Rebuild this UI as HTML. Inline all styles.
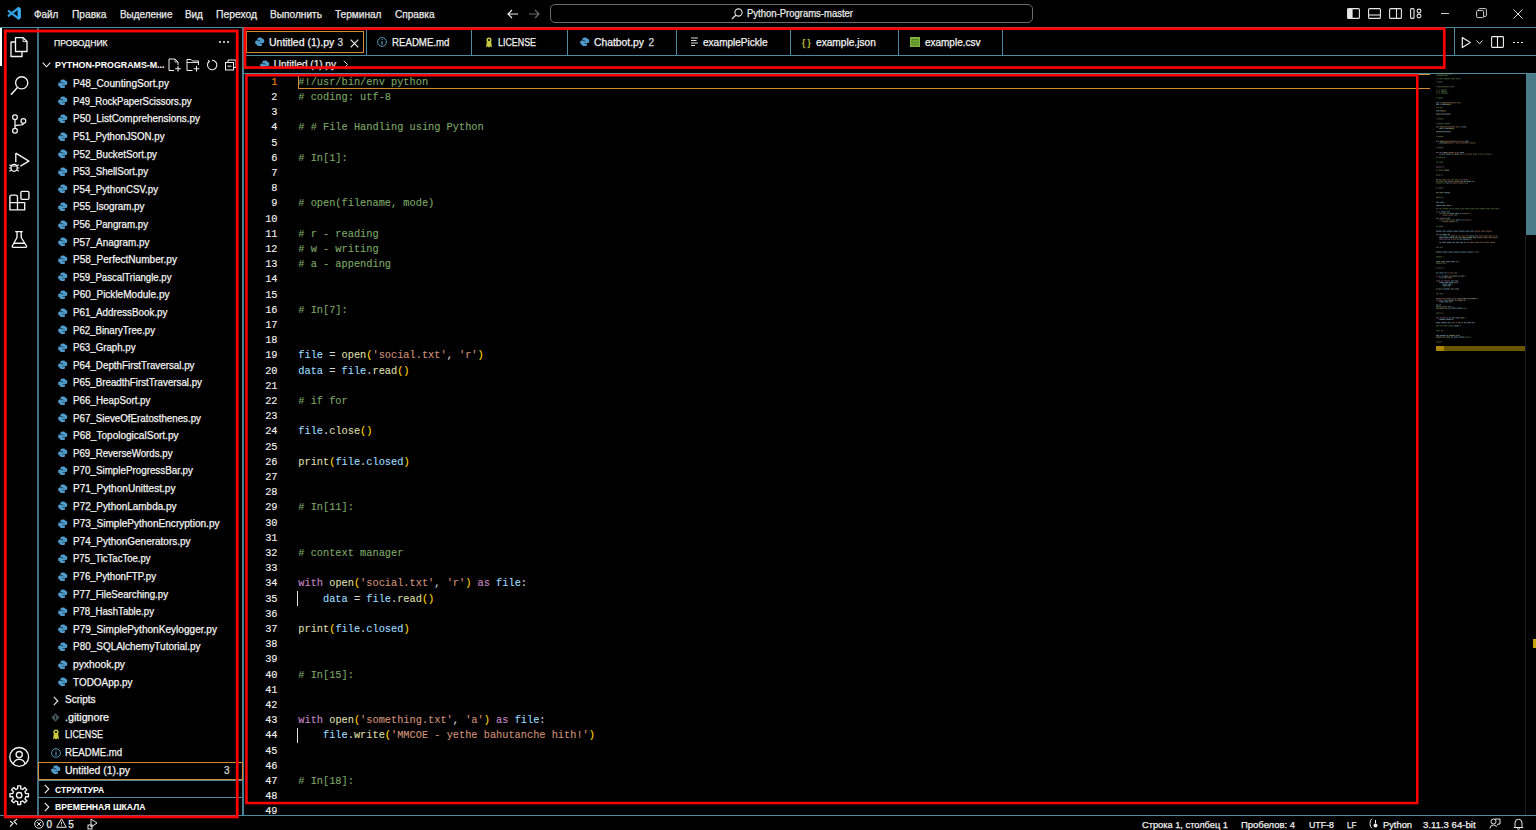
<!DOCTYPE html>
<html><head><meta charset="utf-8"><title>VS Code</title>
<style>
html,body{margin:0;padding:0;background:#000;}
body{width:1536px;height:830px;overflow:hidden;position:relative;font-family:'Liberation Sans', sans-serif;}
div{-webkit-text-stroke:0.25px currentColor;}
.b{-webkit-text-stroke:0.05px currentColor;}
.m{-webkit-text-stroke:0.12px currentColor;}
svg{overflow:visible}
</style></head><body>
<svg style="position:absolute;left:0px;top:0px;" width="30" height="27" viewBox="0 0 30 27" fill="none"><path d="M8.7 11.1 L18.4 18.4 M8.7 15.7 L18.4 8.2" stroke="#2f9de0" stroke-width="2.3" stroke-linecap="round"/><path d="M17.6 8.4 Q17.6 7.2 18.8 7.3 L20 7.8 Q20.9 8.2 20.9 9.2 V17.4 Q20.9 18.4 20 18.8 L18.8 19.4 Q17.6 19.6 17.6 18.3 Z" fill="#3aaaf0"/></svg><div style="position:absolute;left:34.4px;top:10px;font:normal 10.0px/10.0px 'Liberation Sans', sans-serif;color:#e8e8e8;white-space:pre;transform:scaleX(0.9881);transform-origin:0 0;">Файл</div><div style="position:absolute;left:71.6px;top:10px;font:normal 10.0px/10.0px 'Liberation Sans', sans-serif;color:#e8e8e8;white-space:pre;transform:scaleX(1.0183);transform-origin:0 0;">Правка</div><div style="position:absolute;left:119.6px;top:10px;font:normal 10.0px/10.0px 'Liberation Sans', sans-serif;color:#e8e8e8;white-space:pre;transform:scaleX(0.9887);transform-origin:0 0;">Выделение</div><div style="position:absolute;left:184.8px;top:10px;font:normal 10.0px/10.0px 'Liberation Sans', sans-serif;color:#e8e8e8;white-space:pre;transform:scaleX(0.9893);transform-origin:0 0;">Вид</div><div style="position:absolute;left:215.5px;top:10px;font:normal 10.0px/10.0px 'Liberation Sans', sans-serif;color:#e8e8e8;white-space:pre;transform:scaleX(1.0348);transform-origin:0 0;">Переход</div><div style="position:absolute;left:269.7px;top:10px;font:normal 10.0px/10.0px 'Liberation Sans', sans-serif;color:#e8e8e8;white-space:pre;transform:scaleX(1.0125);transform-origin:0 0;">Выполнить</div><div style="position:absolute;left:335px;top:10px;font:normal 10.0px/10.0px 'Liberation Sans', sans-serif;color:#e8e8e8;white-space:pre;transform:scaleX(1.0095);transform-origin:0 0;">Терминал</div><div style="position:absolute;left:394.5px;top:10px;font:normal 10.0px/10.0px 'Liberation Sans', sans-serif;color:#e8e8e8;white-space:pre;transform:scaleX(1.0068);transform-origin:0 0;">Справка</div><svg style="position:absolute;left:507px;top:9px;" width="12" height="10" viewBox="0 0 12 10" fill="none"><path d="M5 1 L1 5 L5 9 M1 5 H11" stroke="#ececec" stroke-width="1.2"/></svg><svg style="position:absolute;left:528px;top:9px;" width="12" height="10" viewBox="0 0 12 10" fill="none"><path d="M7 1 L11 5 L7 9 M11 5 H1" stroke="#6a6a6a" stroke-width="1.2"/></svg><div style="position:absolute;left:550px;top:4px;width:481px;height:17px;border:1px solid #6b6b6b;border-radius:5px;"></div><svg style="position:absolute;left:731px;top:8px;" width="12" height="12" viewBox="0 0 12 12" fill="none"><circle cx="7.5" cy="4.5" r="3.6" stroke="#e0e0e0" stroke-width="1.1"/><path d="M5 7 L1 11" stroke="#e0e0e0" stroke-width="1.2"/></svg><div style="position:absolute;left:747px;top:9px;font:normal 10.0px/10.0px 'Liberation Sans', sans-serif;color:#ececec;white-space:pre;transform:scaleX(0.9489);transform-origin:0 0;">Python-Programs-master</div><svg style="position:absolute;left:1347px;top:8px;" width="13" height="11" viewBox="0 0 13 11" fill="none"><rect x="0.6" y="0.6" width="11.8" height="9.8" rx="1" stroke="#e6e6e6" stroke-width="1.1"/><rect x="0.6" y="0.6" width="5" height="9.8" fill="#e6e6e6"/></svg><svg style="position:absolute;left:1368px;top:8px;" width="13" height="11" viewBox="0 0 13 11" fill="none"><rect x="0.6" y="0.6" width="11.8" height="9.8" rx="1" stroke="#e6e6e6" stroke-width="1.1"/><path d="M0.6 7 H12.4" stroke="#e6e6e6" stroke-width="1.1"/></svg><svg style="position:absolute;left:1389px;top:8px;" width="13" height="11" viewBox="0 0 13 11" fill="none"><rect x="0.6" y="0.6" width="11.8" height="9.8" rx="1" stroke="#e6e6e6" stroke-width="1.1"/><path d="M7.5 0.6 V10.4" stroke="#e6e6e6" stroke-width="1.1"/></svg><svg style="position:absolute;left:1410px;top:8px;" width="13" height="11" viewBox="0 0 13 11" fill="none"><rect x="0.6" y="0.6" width="3.4" height="9.8" rx="1" stroke="#e6e6e6" stroke-width="1.1"/><circle cx="9" cy="3" r="1.9" stroke="#e6e6e6" stroke-width="1.1"/><circle cx="9" cy="8" r="1.9" stroke="#e6e6e6" stroke-width="1.1"/></svg><div style="position:absolute;left:1440.5px;top:13.3px;width:8px;height:1px;background:#d0d0d0;"></div><svg style="position:absolute;left:1476px;top:8px;" width="11" height="11" viewBox="0 0 11 11" fill="none"><rect x="0.6" y="2.6" width="7" height="7" rx="1" stroke="#d0d0d0" stroke-width="1"/><path d="M2.6 2.6 V1.6 Q2.6 0.6 3.6 0.6 H9.4 Q10.4 0.6 10.4 1.6 V7.4 Q10.4 8.4 9.4 8.4 H7.6" stroke="#d0d0d0" stroke-width="1"/></svg><svg style="position:absolute;left:1513px;top:9px;" width="10" height="10" viewBox="0 0 10 10" fill="none"><path d="M0.5 0.5 L9.5 9.5 M9.5 0.5 L0.5 9.5" stroke="#d8d8d8" stroke-width="1"/></svg><div style="position:absolute;left:0px;top:27px;width:1536px;height:1px;background:#4f8b9f;"></div><div style="position:absolute;left:37px;top:28px;width:2px;height:787px;background:#3f6f80;"></div><div style="position:absolute;left:242px;top:28px;width:2px;height:787px;background:#4a8194;"></div><div style="position:absolute;left:0px;top:815px;width:1536px;height:1px;background:#4f8b9f;"></div><div style="position:absolute;left:0px;top:28px;width:2px;height:38px;background:#ffffff;"></div><svg style="position:absolute;left:0px;top:0px;" width="40" height="830" viewBox="0 0 40 830" fill="none"><path d="M15.5 37.6 H23 L27 41.6 V51.5 H15.5 Z" stroke="#f4f4f4" stroke-width="1.35" stroke-linejoin="round"/><path d="M15.5 42 H11 V56.5 H22 V51.5" stroke="#f4f4f4" stroke-width="1.35" stroke-linejoin="round"/><path d="M23 37.6 V41.6 H27" stroke="#f4f4f4" stroke-width="0.9"/><circle cx="21.7" cy="82.8" r="6.1" stroke="#f4f4f4" stroke-width="1.35"/><path d="M17.4 87.4 L11 94.8" stroke="#f4f4f4" stroke-width="1.5"/><circle cx="15" cy="117.3" r="2.4" stroke="#f4f4f4" stroke-width="1.25"/><circle cx="15" cy="130.8" r="2.4" stroke="#f4f4f4" stroke-width="1.25"/><circle cx="23.4" cy="121" r="2.4" stroke="#f4f4f4" stroke-width="1.25"/><path d="M15 119.7 V128.4 M15 126 Q16 125 19 125 Q23.4 125 23.4 123.4" stroke="#f4f4f4" stroke-width="1.25"/><path d="M15.8 153.1 V162.3 M15.8 153.1 L28.9 161.1 L20.4 166.2" stroke="#f4f4f4" stroke-width="1.35" stroke-linejoin="round"/><ellipse cx="14.1" cy="167.8" rx="3.1" ry="3.5" stroke="#f4f4f4" stroke-width="1.25"/><path d="M9.3 164.8 L11.1 165.7 M8.9 168 H11 M9.3 171.2 L11.1 170.3 M18.9 164.8 L17.1 165.7 M19.3 168 H17.2 M18.9 171.2 L17.1 170.3 M11.8 166 H16.4" stroke="#f4f4f4" stroke-width="1.05"/><path d="M9.9 197 Q9.9 195.1 11.8 195.1 H15.6 Q17.5 195.1 17.5 197 V209.9 H9.9 Z M9.9 202.6 H24.7 V209.9 H17.5" stroke="#f4f4f4" stroke-width="1.35" stroke-linejoin="round"/><rect x="20.9" y="191.3" width="8" height="8" rx="1" stroke="#f4f4f4" stroke-width="1.35"/><path d="M15.2 231.6 H22.8 M17 231.6 V237.5 L12.3 246 Q11.8 247.3 13.2 247.3 H25.6 Q27 247.3 26.5 246 L21.2 237.5 V231.6 M14.2 243.2 H24.6" stroke="#f4f4f4" stroke-width="1.35" stroke-linejoin="round"/><circle cx="19.2" cy="756.9" r="9.4" stroke="#f4f4f4" stroke-width="1.35"/><circle cx="19.2" cy="754.6" r="3.1" stroke="#f4f4f4" stroke-width="1.35"/><path d="M13.3 764 Q14.5 759.3 19.2 759.3 Q23.9 759.3 25.1 764" stroke="#f4f4f4" stroke-width="1.35"/><polygon points="16.64,789.01 17.69,788.67 17.65,785.93 20.75,785.93 20.71,788.67 21.76,789.01 22.75,789.52 24.66,787.55 26.85,789.74 24.88,791.65 25.39,792.64 25.73,793.69 28.47,793.65 28.47,796.75 25.73,796.71 25.39,797.76 24.88,798.75 26.85,800.66 24.66,802.85 22.75,800.88 21.76,801.39 20.71,801.73 20.75,804.47 17.65,804.47 17.69,801.73 16.64,801.39 15.65,800.88 13.74,802.85 11.55,800.66 13.52,798.75 13.01,797.76 12.67,796.71 9.93,796.75 9.93,793.65 12.67,793.69 13.01,792.64 13.52,791.65 11.55,789.74 13.74,787.55 15.65,789.52" stroke="#f4f4f4" stroke-width="1.35" stroke-linejoin="round"/><circle cx="19.2" cy="795.2" r="2.7" stroke="#f4f4f4" stroke-width="1.35"/></svg><div style="position:absolute;left:54.4px;top:39px;font:normal 8.8px/8.8px 'Liberation Sans', sans-serif;color:#f0f0f0;white-space:pre;transform:scaleX(0.9776);transform-origin:0 0;">ПРОВОДНИК</div><div style="position:absolute;left:219.2px;top:41.2px;width:2.1px;height:2.1px;background:#f0f0f0;border-radius:1px"></div><div style="position:absolute;left:223.2px;top:41.2px;width:2.1px;height:2.1px;background:#f0f0f0;border-radius:1px"></div><div style="position:absolute;left:227.2px;top:41.2px;width:2.1px;height:2.1px;background:#f0f0f0;border-radius:1px"></div><svg style="position:absolute;left:42px;top:62px;" width="9" height="6" viewBox="0 0 9 6" fill="none"><path d="M0.7 0.7 L4.5 4.8 L8.3 0.7" stroke="#f0f0f0" stroke-width="1.1"/></svg><div class="b" style="position:absolute;left:54.6px;top:61px;font:bold 8.84px/8.84px 'Liberation Sans', sans-serif;color:#ffffff;white-space:pre;transform:scaleX(1.0011);transform-origin:0 0;">PYTHON-PROGRAMS-M...</div><svg style="position:absolute;left:168px;top:58px;" width="14" height="14" viewBox="0 0 14 14" fill="none"><path d="M6 12.5 H1 V1 H7 L10 4 V7" stroke="#f0f0f0" stroke-width="1"/><path d="M7 1 V4 H10" stroke="#f0f0f0" stroke-width="0.8"/><path d="M10 8 V13.5 M7.2 10.8 H12.8" stroke="#f0f0f0" stroke-width="1.1"/></svg><svg style="position:absolute;left:186px;top:58px;" width="15" height="14" viewBox="0 0 15 14" fill="none"><path d="M6.5 12.5 H1 V1.5 H5 L6.5 3 H12.5 V7" stroke="#f0f0f0" stroke-width="1"/><path d="M1 4.5 H12.5" stroke="#f0f0f0" stroke-width="0.9"/><path d="M10.5 8 V13.5 M7.7 10.8 H13.3" stroke="#f0f0f0" stroke-width="1.1"/></svg><svg style="position:absolute;left:206px;top:59px;" width="12" height="12" viewBox="0 0 12 12" fill="none"><path d="M3.4 2.2 A4.7 4.7 0 1 0 6 1.3" stroke="#f0f0f0" stroke-width="1.1"/><path d="M2 0.8 L3.6 2.4 L1.8 3.8" stroke="#f0f0f0" stroke-width="1"/></svg><svg style="position:absolute;left:225px;top:59px;" width="12" height="12" viewBox="0 0 12 12" fill="none"><rect x="0.5" y="3.5" width="8" height="7.5" stroke="#f0f0f0" stroke-width="1"/><path d="M3 3.5 V1 H11 V8.5 H8.5" stroke="#f0f0f0" stroke-width="1"/><path d="M2.5 7.2 H6.5" stroke="#f0f0f0" stroke-width="1"/></svg><svg style="position:absolute;left:58px;top:78.85px;" width="9.5" height="9.5" viewBox="0 0 10 10" fill="none"><path d="M5 0.4 C3 0.4 2.6 1.2 2.6 2.2 V3.2 H5.2 V3.7 H1.6 C0.6 3.7 0.2 4.6 0.2 5.8 C0.2 7.1 0.7 7.9 1.6 7.9 H2.6 V6.6 C2.6 5.6 3.4 4.9 4.4 4.9 H6.6 C7.4 4.9 8 4.3 8 3.5 V2.2 C8 1.1 7 0.4 5 0.4 Z" fill="#4f9ccc"/><path d="M5 9.6 C7 9.6 7.4 8.8 7.4 7.8 V6.8 H4.8 V6.3 H8.4 C9.4 6.3 9.8 5.4 9.8 4.2 C9.8 2.9 9.3 2.1 8.4 2.1 H7.4 V3.4 C7.4 4.4 6.6 5.1 5.6 5.1 H3.4 C2.6 5.1 2 5.7 2 6.5 V7.8 C2 8.9 3 9.6 5 9.6 Z" fill="#4f9ccc"/></svg><div style="position:absolute;left:72.5px;top:79px;font:normal 10.0px/10.0px 'Liberation Sans', sans-serif;color:#f4f4f4;white-space:pre;transform:scaleX(1.0097);transform-origin:0 0;">P48_CountingSort.py</div><svg style="position:absolute;left:58px;top:96.44999999999999px;" width="9.5" height="9.5" viewBox="0 0 10 10" fill="none"><path d="M5 0.4 C3 0.4 2.6 1.2 2.6 2.2 V3.2 H5.2 V3.7 H1.6 C0.6 3.7 0.2 4.6 0.2 5.8 C0.2 7.1 0.7 7.9 1.6 7.9 H2.6 V6.6 C2.6 5.6 3.4 4.9 4.4 4.9 H6.6 C7.4 4.9 8 4.3 8 3.5 V2.2 C8 1.1 7 0.4 5 0.4 Z" fill="#4f9ccc"/><path d="M5 9.6 C7 9.6 7.4 8.8 7.4 7.8 V6.8 H4.8 V6.3 H8.4 C9.4 6.3 9.8 5.4 9.8 4.2 C9.8 2.9 9.3 2.1 8.4 2.1 H7.4 V3.4 C7.4 4.4 6.6 5.1 5.6 5.1 H3.4 C2.6 5.1 2 5.7 2 6.5 V7.8 C2 8.9 3 9.6 5 9.6 Z" fill="#4f9ccc"/></svg><div style="position:absolute;left:72.5px;top:97px;font:normal 10.0px/10.0px 'Liberation Sans', sans-serif;color:#f4f4f4;white-space:pre;transform:scaleX(0.9560);transform-origin:0 0;">P49_RockPaperScissors.py</div><svg style="position:absolute;left:58px;top:114.05px;" width="9.5" height="9.5" viewBox="0 0 10 10" fill="none"><path d="M5 0.4 C3 0.4 2.6 1.2 2.6 2.2 V3.2 H5.2 V3.7 H1.6 C0.6 3.7 0.2 4.6 0.2 5.8 C0.2 7.1 0.7 7.9 1.6 7.9 H2.6 V6.6 C2.6 5.6 3.4 4.9 4.4 4.9 H6.6 C7.4 4.9 8 4.3 8 3.5 V2.2 C8 1.1 7 0.4 5 0.4 Z" fill="#4f9ccc"/><path d="M5 9.6 C7 9.6 7.4 8.8 7.4 7.8 V6.8 H4.8 V6.3 H8.4 C9.4 6.3 9.8 5.4 9.8 4.2 C9.8 2.9 9.3 2.1 8.4 2.1 H7.4 V3.4 C7.4 4.4 6.6 5.1 5.6 5.1 H3.4 C2.6 5.1 2 5.7 2 6.5 V7.8 C2 8.9 3 9.6 5 9.6 Z" fill="#4f9ccc"/></svg><div style="position:absolute;left:72.5px;top:114px;font:normal 10.0px/10.0px 'Liberation Sans', sans-serif;color:#f4f4f4;white-space:pre;transform:scaleX(0.9933);transform-origin:0 0;">P50_ListComprehensions.py</div><svg style="position:absolute;left:58px;top:131.65px;" width="9.5" height="9.5" viewBox="0 0 10 10" fill="none"><path d="M5 0.4 C3 0.4 2.6 1.2 2.6 2.2 V3.2 H5.2 V3.7 H1.6 C0.6 3.7 0.2 4.6 0.2 5.8 C0.2 7.1 0.7 7.9 1.6 7.9 H2.6 V6.6 C2.6 5.6 3.4 4.9 4.4 4.9 H6.6 C7.4 4.9 8 4.3 8 3.5 V2.2 C8 1.1 7 0.4 5 0.4 Z" fill="#4f9ccc"/><path d="M5 9.6 C7 9.6 7.4 8.8 7.4 7.8 V6.8 H4.8 V6.3 H8.4 C9.4 6.3 9.8 5.4 9.8 4.2 C9.8 2.9 9.3 2.1 8.4 2.1 H7.4 V3.4 C7.4 4.4 6.6 5.1 5.6 5.1 H3.4 C2.6 5.1 2 5.7 2 6.5 V7.8 C2 8.9 3 9.6 5 9.6 Z" fill="#4f9ccc"/></svg><div style="position:absolute;left:72.5px;top:132px;font:normal 10.0px/10.0px 'Liberation Sans', sans-serif;color:#f4f4f4;white-space:pre;transform:scaleX(0.9683);transform-origin:0 0;">P51_PythonJSON.py</div><svg style="position:absolute;left:58px;top:149.25px;" width="9.5" height="9.5" viewBox="0 0 10 10" fill="none"><path d="M5 0.4 C3 0.4 2.6 1.2 2.6 2.2 V3.2 H5.2 V3.7 H1.6 C0.6 3.7 0.2 4.6 0.2 5.8 C0.2 7.1 0.7 7.9 1.6 7.9 H2.6 V6.6 C2.6 5.6 3.4 4.9 4.4 4.9 H6.6 C7.4 4.9 8 4.3 8 3.5 V2.2 C8 1.1 7 0.4 5 0.4 Z" fill="#4f9ccc"/><path d="M5 9.6 C7 9.6 7.4 8.8 7.4 7.8 V6.8 H4.8 V6.3 H8.4 C9.4 6.3 9.8 5.4 9.8 4.2 C9.8 2.9 9.3 2.1 8.4 2.1 H7.4 V3.4 C7.4 4.4 6.6 5.1 5.6 5.1 H3.4 C2.6 5.1 2 5.7 2 6.5 V7.8 C2 8.9 3 9.6 5 9.6 Z" fill="#4f9ccc"/></svg><div style="position:absolute;left:72.5px;top:150px;font:normal 10.0px/10.0px 'Liberation Sans', sans-serif;color:#f4f4f4;white-space:pre;transform:scaleX(0.9812);transform-origin:0 0;">P52_BucketSort.py</div><svg style="position:absolute;left:58px;top:166.85px;" width="9.5" height="9.5" viewBox="0 0 10 10" fill="none"><path d="M5 0.4 C3 0.4 2.6 1.2 2.6 2.2 V3.2 H5.2 V3.7 H1.6 C0.6 3.7 0.2 4.6 0.2 5.8 C0.2 7.1 0.7 7.9 1.6 7.9 H2.6 V6.6 C2.6 5.6 3.4 4.9 4.4 4.9 H6.6 C7.4 4.9 8 4.3 8 3.5 V2.2 C8 1.1 7 0.4 5 0.4 Z" fill="#4f9ccc"/><path d="M5 9.6 C7 9.6 7.4 8.8 7.4 7.8 V6.8 H4.8 V6.3 H8.4 C9.4 6.3 9.8 5.4 9.8 4.2 C9.8 2.9 9.3 2.1 8.4 2.1 H7.4 V3.4 C7.4 4.4 6.6 5.1 5.6 5.1 H3.4 C2.6 5.1 2 5.7 2 6.5 V7.8 C2 8.9 3 9.6 5 9.6 Z" fill="#4f9ccc"/></svg><div style="position:absolute;left:72.5px;top:167px;font:normal 10.0px/10.0px 'Liberation Sans', sans-serif;color:#f4f4f4;white-space:pre;transform:scaleX(0.9705);transform-origin:0 0;">P53_ShellSort.py</div><svg style="position:absolute;left:58px;top:184.45000000000002px;" width="9.5" height="9.5" viewBox="0 0 10 10" fill="none"><path d="M5 0.4 C3 0.4 2.6 1.2 2.6 2.2 V3.2 H5.2 V3.7 H1.6 C0.6 3.7 0.2 4.6 0.2 5.8 C0.2 7.1 0.7 7.9 1.6 7.9 H2.6 V6.6 C2.6 5.6 3.4 4.9 4.4 4.9 H6.6 C7.4 4.9 8 4.3 8 3.5 V2.2 C8 1.1 7 0.4 5 0.4 Z" fill="#4f9ccc"/><path d="M5 9.6 C7 9.6 7.4 8.8 7.4 7.8 V6.8 H4.8 V6.3 H8.4 C9.4 6.3 9.8 5.4 9.8 4.2 C9.8 2.9 9.3 2.1 8.4 2.1 H7.4 V3.4 C7.4 4.4 6.6 5.1 5.6 5.1 H3.4 C2.6 5.1 2 5.7 2 6.5 V7.8 C2 8.9 3 9.6 5 9.6 Z" fill="#4f9ccc"/></svg><div style="position:absolute;left:72.5px;top:185px;font:normal 10.0px/10.0px 'Liberation Sans', sans-serif;color:#f4f4f4;white-space:pre;transform:scaleX(0.9716);transform-origin:0 0;">P54_PythonCSV.py</div><svg style="position:absolute;left:58px;top:202.05px;" width="9.5" height="9.5" viewBox="0 0 10 10" fill="none"><path d="M5 0.4 C3 0.4 2.6 1.2 2.6 2.2 V3.2 H5.2 V3.7 H1.6 C0.6 3.7 0.2 4.6 0.2 5.8 C0.2 7.1 0.7 7.9 1.6 7.9 H2.6 V6.6 C2.6 5.6 3.4 4.9 4.4 4.9 H6.6 C7.4 4.9 8 4.3 8 3.5 V2.2 C8 1.1 7 0.4 5 0.4 Z" fill="#4f9ccc"/><path d="M5 9.6 C7 9.6 7.4 8.8 7.4 7.8 V6.8 H4.8 V6.3 H8.4 C9.4 6.3 9.8 5.4 9.8 4.2 C9.8 2.9 9.3 2.1 8.4 2.1 H7.4 V3.4 C7.4 4.4 6.6 5.1 5.6 5.1 H3.4 C2.6 5.1 2 5.7 2 6.5 V7.8 C2 8.9 3 9.6 5 9.6 Z" fill="#4f9ccc"/></svg><div style="position:absolute;left:72.5px;top:202px;font:normal 10.0px/10.0px 'Liberation Sans', sans-serif;color:#f4f4f4;white-space:pre;transform:scaleX(0.9818);transform-origin:0 0;">P55_Isogram.py</div><svg style="position:absolute;left:58px;top:219.65px;" width="9.5" height="9.5" viewBox="0 0 10 10" fill="none"><path d="M5 0.4 C3 0.4 2.6 1.2 2.6 2.2 V3.2 H5.2 V3.7 H1.6 C0.6 3.7 0.2 4.6 0.2 5.8 C0.2 7.1 0.7 7.9 1.6 7.9 H2.6 V6.6 C2.6 5.6 3.4 4.9 4.4 4.9 H6.6 C7.4 4.9 8 4.3 8 3.5 V2.2 C8 1.1 7 0.4 5 0.4 Z" fill="#4f9ccc"/><path d="M5 9.6 C7 9.6 7.4 8.8 7.4 7.8 V6.8 H4.8 V6.3 H8.4 C9.4 6.3 9.8 5.4 9.8 4.2 C9.8 2.9 9.3 2.1 8.4 2.1 H7.4 V3.4 C7.4 4.4 6.6 5.1 5.6 5.1 H3.4 C2.6 5.1 2 5.7 2 6.5 V7.8 C2 8.9 3 9.6 5 9.6 Z" fill="#4f9ccc"/></svg><div style="position:absolute;left:72.5px;top:220px;font:normal 10.0px/10.0px 'Liberation Sans', sans-serif;color:#f4f4f4;white-space:pre;transform:scaleX(0.9705);transform-origin:0 0;">P56_Pangram.py</div><svg style="position:absolute;left:58px;top:237.25px;" width="9.5" height="9.5" viewBox="0 0 10 10" fill="none"><path d="M5 0.4 C3 0.4 2.6 1.2 2.6 2.2 V3.2 H5.2 V3.7 H1.6 C0.6 3.7 0.2 4.6 0.2 5.8 C0.2 7.1 0.7 7.9 1.6 7.9 H2.6 V6.6 C2.6 5.6 3.4 4.9 4.4 4.9 H6.6 C7.4 4.9 8 4.3 8 3.5 V2.2 C8 1.1 7 0.4 5 0.4 Z" fill="#4f9ccc"/><path d="M5 9.6 C7 9.6 7.4 8.8 7.4 7.8 V6.8 H4.8 V6.3 H8.4 C9.4 6.3 9.8 5.4 9.8 4.2 C9.8 2.9 9.3 2.1 8.4 2.1 H7.4 V3.4 C7.4 4.4 6.6 5.1 5.6 5.1 H3.4 C2.6 5.1 2 5.7 2 6.5 V7.8 C2 8.9 3 9.6 5 9.6 Z" fill="#4f9ccc"/></svg><div style="position:absolute;left:72.5px;top:238px;font:normal 10.0px/10.0px 'Liberation Sans', sans-serif;color:#f4f4f4;white-space:pre;transform:scaleX(0.9899);transform-origin:0 0;">P57_Anagram.py</div><svg style="position:absolute;left:58px;top:254.85000000000002px;" width="9.5" height="9.5" viewBox="0 0 10 10" fill="none"><path d="M5 0.4 C3 0.4 2.6 1.2 2.6 2.2 V3.2 H5.2 V3.7 H1.6 C0.6 3.7 0.2 4.6 0.2 5.8 C0.2 7.1 0.7 7.9 1.6 7.9 H2.6 V6.6 C2.6 5.6 3.4 4.9 4.4 4.9 H6.6 C7.4 4.9 8 4.3 8 3.5 V2.2 C8 1.1 7 0.4 5 0.4 Z" fill="#4f9ccc"/><path d="M5 9.6 C7 9.6 7.4 8.8 7.4 7.8 V6.8 H4.8 V6.3 H8.4 C9.4 6.3 9.8 5.4 9.8 4.2 C9.8 2.9 9.3 2.1 8.4 2.1 H7.4 V3.4 C7.4 4.4 6.6 5.1 5.6 5.1 H3.4 C2.6 5.1 2 5.7 2 6.5 V7.8 C2 8.9 3 9.6 5 9.6 Z" fill="#4f9ccc"/></svg><div style="position:absolute;left:72.5px;top:255px;font:normal 10.0px/10.0px 'Liberation Sans', sans-serif;color:#f4f4f4;white-space:pre;transform:scaleX(1.0059);transform-origin:0 0;">P58_PerfectNumber.py</div><svg style="position:absolute;left:58px;top:272.45000000000005px;" width="9.5" height="9.5" viewBox="0 0 10 10" fill="none"><path d="M5 0.4 C3 0.4 2.6 1.2 2.6 2.2 V3.2 H5.2 V3.7 H1.6 C0.6 3.7 0.2 4.6 0.2 5.8 C0.2 7.1 0.7 7.9 1.6 7.9 H2.6 V6.6 C2.6 5.6 3.4 4.9 4.4 4.9 H6.6 C7.4 4.9 8 4.3 8 3.5 V2.2 C8 1.1 7 0.4 5 0.4 Z" fill="#4f9ccc"/><path d="M5 9.6 C7 9.6 7.4 8.8 7.4 7.8 V6.8 H4.8 V6.3 H8.4 C9.4 6.3 9.8 5.4 9.8 4.2 C9.8 2.9 9.3 2.1 8.4 2.1 H7.4 V3.4 C7.4 4.4 6.6 5.1 5.6 5.1 H3.4 C2.6 5.1 2 5.7 2 6.5 V7.8 C2 8.9 3 9.6 5 9.6 Z" fill="#4f9ccc"/></svg><div style="position:absolute;left:72.5px;top:273px;font:normal 10.0px/10.0px 'Liberation Sans', sans-serif;color:#f4f4f4;white-space:pre;transform:scaleX(0.9613);transform-origin:0 0;">P59_PascalTriangle.py</div><svg style="position:absolute;left:58px;top:290.05000000000007px;" width="9.5" height="9.5" viewBox="0 0 10 10" fill="none"><path d="M5 0.4 C3 0.4 2.6 1.2 2.6 2.2 V3.2 H5.2 V3.7 H1.6 C0.6 3.7 0.2 4.6 0.2 5.8 C0.2 7.1 0.7 7.9 1.6 7.9 H2.6 V6.6 C2.6 5.6 3.4 4.9 4.4 4.9 H6.6 C7.4 4.9 8 4.3 8 3.5 V2.2 C8 1.1 7 0.4 5 0.4 Z" fill="#4f9ccc"/><path d="M5 9.6 C7 9.6 7.4 8.8 7.4 7.8 V6.8 H4.8 V6.3 H8.4 C9.4 6.3 9.8 5.4 9.8 4.2 C9.8 2.9 9.3 2.1 8.4 2.1 H7.4 V3.4 C7.4 4.4 6.6 5.1 5.6 5.1 H3.4 C2.6 5.1 2 5.7 2 6.5 V7.8 C2 8.9 3 9.6 5 9.6 Z" fill="#4f9ccc"/></svg><div style="position:absolute;left:72.5px;top:290px;font:normal 10.0px/10.0px 'Liberation Sans', sans-serif;color:#f4f4f4;white-space:pre;transform:scaleX(1.0034);transform-origin:0 0;">P60_PickleModule.py</div><svg style="position:absolute;left:58px;top:307.65000000000003px;" width="9.5" height="9.5" viewBox="0 0 10 10" fill="none"><path d="M5 0.4 C3 0.4 2.6 1.2 2.6 2.2 V3.2 H5.2 V3.7 H1.6 C0.6 3.7 0.2 4.6 0.2 5.8 C0.2 7.1 0.7 7.9 1.6 7.9 H2.6 V6.6 C2.6 5.6 3.4 4.9 4.4 4.9 H6.6 C7.4 4.9 8 4.3 8 3.5 V2.2 C8 1.1 7 0.4 5 0.4 Z" fill="#4f9ccc"/><path d="M5 9.6 C7 9.6 7.4 8.8 7.4 7.8 V6.8 H4.8 V6.3 H8.4 C9.4 6.3 9.8 5.4 9.8 4.2 C9.8 2.9 9.3 2.1 8.4 2.1 H7.4 V3.4 C7.4 4.4 6.6 5.1 5.6 5.1 H3.4 C2.6 5.1 2 5.7 2 6.5 V7.8 C2 8.9 3 9.6 5 9.6 Z" fill="#4f9ccc"/></svg><div style="position:absolute;left:72.5px;top:308px;font:normal 10.0px/10.0px 'Liberation Sans', sans-serif;color:#f4f4f4;white-space:pre;transform:scaleX(0.9826);transform-origin:0 0;">P61_AddressBook.py</div><svg style="position:absolute;left:58px;top:325.25000000000006px;" width="9.5" height="9.5" viewBox="0 0 10 10" fill="none"><path d="M5 0.4 C3 0.4 2.6 1.2 2.6 2.2 V3.2 H5.2 V3.7 H1.6 C0.6 3.7 0.2 4.6 0.2 5.8 C0.2 7.1 0.7 7.9 1.6 7.9 H2.6 V6.6 C2.6 5.6 3.4 4.9 4.4 4.9 H6.6 C7.4 4.9 8 4.3 8 3.5 V2.2 C8 1.1 7 0.4 5 0.4 Z" fill="#4f9ccc"/><path d="M5 9.6 C7 9.6 7.4 8.8 7.4 7.8 V6.8 H4.8 V6.3 H8.4 C9.4 6.3 9.8 5.4 9.8 4.2 C9.8 2.9 9.3 2.1 8.4 2.1 H7.4 V3.4 C7.4 4.4 6.6 5.1 5.6 5.1 H3.4 C2.6 5.1 2 5.7 2 6.5 V7.8 C2 8.9 3 9.6 5 9.6 Z" fill="#4f9ccc"/></svg><div style="position:absolute;left:72.5px;top:326px;font:normal 10.0px/10.0px 'Liberation Sans', sans-serif;color:#f4f4f4;white-space:pre;transform:scaleX(0.9621);transform-origin:0 0;">P62_BinaryTree.py</div><svg style="position:absolute;left:58px;top:342.85px;" width="9.5" height="9.5" viewBox="0 0 10 10" fill="none"><path d="M5 0.4 C3 0.4 2.6 1.2 2.6 2.2 V3.2 H5.2 V3.7 H1.6 C0.6 3.7 0.2 4.6 0.2 5.8 C0.2 7.1 0.7 7.9 1.6 7.9 H2.6 V6.6 C2.6 5.6 3.4 4.9 4.4 4.9 H6.6 C7.4 4.9 8 4.3 8 3.5 V2.2 C8 1.1 7 0.4 5 0.4 Z" fill="#4f9ccc"/><path d="M5 9.6 C7 9.6 7.4 8.8 7.4 7.8 V6.8 H4.8 V6.3 H8.4 C9.4 6.3 9.8 5.4 9.8 4.2 C9.8 2.9 9.3 2.1 8.4 2.1 H7.4 V3.4 C7.4 4.4 6.6 5.1 5.6 5.1 H3.4 C2.6 5.1 2 5.7 2 6.5 V7.8 C2 8.9 3 9.6 5 9.6 Z" fill="#4f9ccc"/></svg><div style="position:absolute;left:72.5px;top:343px;font:normal 10.0px/10.0px 'Liberation Sans', sans-serif;color:#f4f4f4;white-space:pre;transform:scaleX(0.9690);transform-origin:0 0;">P63_Graph.py</div><svg style="position:absolute;left:58px;top:360.45000000000005px;" width="9.5" height="9.5" viewBox="0 0 10 10" fill="none"><path d="M5 0.4 C3 0.4 2.6 1.2 2.6 2.2 V3.2 H5.2 V3.7 H1.6 C0.6 3.7 0.2 4.6 0.2 5.8 C0.2 7.1 0.7 7.9 1.6 7.9 H2.6 V6.6 C2.6 5.6 3.4 4.9 4.4 4.9 H6.6 C7.4 4.9 8 4.3 8 3.5 V2.2 C8 1.1 7 0.4 5 0.4 Z" fill="#4f9ccc"/><path d="M5 9.6 C7 9.6 7.4 8.8 7.4 7.8 V6.8 H4.8 V6.3 H8.4 C9.4 6.3 9.8 5.4 9.8 4.2 C9.8 2.9 9.3 2.1 8.4 2.1 H7.4 V3.4 C7.4 4.4 6.6 5.1 5.6 5.1 H3.4 C2.6 5.1 2 5.7 2 6.5 V7.8 C2 8.9 3 9.6 5 9.6 Z" fill="#4f9ccc"/></svg><div style="position:absolute;left:72.5px;top:361px;font:normal 10.0px/10.0px 'Liberation Sans', sans-serif;color:#f4f4f4;white-space:pre;transform:scaleX(0.9789);transform-origin:0 0;">P64_DepthFirstTraversal.py</div><svg style="position:absolute;left:58px;top:378.05000000000007px;" width="9.5" height="9.5" viewBox="0 0 10 10" fill="none"><path d="M5 0.4 C3 0.4 2.6 1.2 2.6 2.2 V3.2 H5.2 V3.7 H1.6 C0.6 3.7 0.2 4.6 0.2 5.8 C0.2 7.1 0.7 7.9 1.6 7.9 H2.6 V6.6 C2.6 5.6 3.4 4.9 4.4 4.9 H6.6 C7.4 4.9 8 4.3 8 3.5 V2.2 C8 1.1 7 0.4 5 0.4 Z" fill="#4f9ccc"/><path d="M5 9.6 C7 9.6 7.4 8.8 7.4 7.8 V6.8 H4.8 V6.3 H8.4 C9.4 6.3 9.8 5.4 9.8 4.2 C9.8 2.9 9.3 2.1 8.4 2.1 H7.4 V3.4 C7.4 4.4 6.6 5.1 5.6 5.1 H3.4 C2.6 5.1 2 5.7 2 6.5 V7.8 C2 8.9 3 9.6 5 9.6 Z" fill="#4f9ccc"/></svg><div style="position:absolute;left:72.5px;top:378px;font:normal 10.0px/10.0px 'Liberation Sans', sans-serif;color:#f4f4f4;white-space:pre;transform:scaleX(0.9738);transform-origin:0 0;">P65_BreadthFirstTraversal.py</div><svg style="position:absolute;left:58px;top:395.65000000000003px;" width="9.5" height="9.5" viewBox="0 0 10 10" fill="none"><path d="M5 0.4 C3 0.4 2.6 1.2 2.6 2.2 V3.2 H5.2 V3.7 H1.6 C0.6 3.7 0.2 4.6 0.2 5.8 C0.2 7.1 0.7 7.9 1.6 7.9 H2.6 V6.6 C2.6 5.6 3.4 4.9 4.4 4.9 H6.6 C7.4 4.9 8 4.3 8 3.5 V2.2 C8 1.1 7 0.4 5 0.4 Z" fill="#4f9ccc"/><path d="M5 9.6 C7 9.6 7.4 8.8 7.4 7.8 V6.8 H4.8 V6.3 H8.4 C9.4 6.3 9.8 5.4 9.8 4.2 C9.8 2.9 9.3 2.1 8.4 2.1 H7.4 V3.4 C7.4 4.4 6.6 5.1 5.6 5.1 H3.4 C2.6 5.1 2 5.7 2 6.5 V7.8 C2 8.9 3 9.6 5 9.6 Z" fill="#4f9ccc"/></svg><div style="position:absolute;left:72.5px;top:396px;font:normal 10.0px/10.0px 'Liberation Sans', sans-serif;color:#f4f4f4;white-space:pre;transform:scaleX(0.9816);transform-origin:0 0;">P66_HeapSort.py</div><svg style="position:absolute;left:58px;top:413.25000000000006px;" width="9.5" height="9.5" viewBox="0 0 10 10" fill="none"><path d="M5 0.4 C3 0.4 2.6 1.2 2.6 2.2 V3.2 H5.2 V3.7 H1.6 C0.6 3.7 0.2 4.6 0.2 5.8 C0.2 7.1 0.7 7.9 1.6 7.9 H2.6 V6.6 C2.6 5.6 3.4 4.9 4.4 4.9 H6.6 C7.4 4.9 8 4.3 8 3.5 V2.2 C8 1.1 7 0.4 5 0.4 Z" fill="#4f9ccc"/><path d="M5 9.6 C7 9.6 7.4 8.8 7.4 7.8 V6.8 H4.8 V6.3 H8.4 C9.4 6.3 9.8 5.4 9.8 4.2 C9.8 2.9 9.3 2.1 8.4 2.1 H7.4 V3.4 C7.4 4.4 6.6 5.1 5.6 5.1 H3.4 C2.6 5.1 2 5.7 2 6.5 V7.8 C2 8.9 3 9.6 5 9.6 Z" fill="#4f9ccc"/></svg><div style="position:absolute;left:72.5px;top:414px;font:normal 10.0px/10.0px 'Liberation Sans', sans-serif;color:#f4f4f4;white-space:pre;transform:scaleX(0.9756);transform-origin:0 0;">P67_SieveOfEratosthenes.py</div><svg style="position:absolute;left:58px;top:430.85px;" width="9.5" height="9.5" viewBox="0 0 10 10" fill="none"><path d="M5 0.4 C3 0.4 2.6 1.2 2.6 2.2 V3.2 H5.2 V3.7 H1.6 C0.6 3.7 0.2 4.6 0.2 5.8 C0.2 7.1 0.7 7.9 1.6 7.9 H2.6 V6.6 C2.6 5.6 3.4 4.9 4.4 4.9 H6.6 C7.4 4.9 8 4.3 8 3.5 V2.2 C8 1.1 7 0.4 5 0.4 Z" fill="#4f9ccc"/><path d="M5 9.6 C7 9.6 7.4 8.8 7.4 7.8 V6.8 H4.8 V6.3 H8.4 C9.4 6.3 9.8 5.4 9.8 4.2 C9.8 2.9 9.3 2.1 8.4 2.1 H7.4 V3.4 C7.4 4.4 6.6 5.1 5.6 5.1 H3.4 C2.6 5.1 2 5.7 2 6.5 V7.8 C2 8.9 3 9.6 5 9.6 Z" fill="#4f9ccc"/></svg><div style="position:absolute;left:72.5px;top:431px;font:normal 10.0px/10.0px 'Liberation Sans', sans-serif;color:#f4f4f4;white-space:pre;transform:scaleX(1.0040);transform-origin:0 0;">P68_TopologicalSort.py</div><svg style="position:absolute;left:58px;top:448.45000000000005px;" width="9.5" height="9.5" viewBox="0 0 10 10" fill="none"><path d="M5 0.4 C3 0.4 2.6 1.2 2.6 2.2 V3.2 H5.2 V3.7 H1.6 C0.6 3.7 0.2 4.6 0.2 5.8 C0.2 7.1 0.7 7.9 1.6 7.9 H2.6 V6.6 C2.6 5.6 3.4 4.9 4.4 4.9 H6.6 C7.4 4.9 8 4.3 8 3.5 V2.2 C8 1.1 7 0.4 5 0.4 Z" fill="#4f9ccc"/><path d="M5 9.6 C7 9.6 7.4 8.8 7.4 7.8 V6.8 H4.8 V6.3 H8.4 C9.4 6.3 9.8 5.4 9.8 4.2 C9.8 2.9 9.3 2.1 8.4 2.1 H7.4 V3.4 C7.4 4.4 6.6 5.1 5.6 5.1 H3.4 C2.6 5.1 2 5.7 2 6.5 V7.8 C2 8.9 3 9.6 5 9.6 Z" fill="#4f9ccc"/></svg><div style="position:absolute;left:72.5px;top:449px;font:normal 10.0px/10.0px 'Liberation Sans', sans-serif;color:#f4f4f4;white-space:pre;transform:scaleX(0.9693);transform-origin:0 0;">P69_ReverseWords.py</div><svg style="position:absolute;left:58px;top:466.05000000000007px;" width="9.5" height="9.5" viewBox="0 0 10 10" fill="none"><path d="M5 0.4 C3 0.4 2.6 1.2 2.6 2.2 V3.2 H5.2 V3.7 H1.6 C0.6 3.7 0.2 4.6 0.2 5.8 C0.2 7.1 0.7 7.9 1.6 7.9 H2.6 V6.6 C2.6 5.6 3.4 4.9 4.4 4.9 H6.6 C7.4 4.9 8 4.3 8 3.5 V2.2 C8 1.1 7 0.4 5 0.4 Z" fill="#4f9ccc"/><path d="M5 9.6 C7 9.6 7.4 8.8 7.4 7.8 V6.8 H4.8 V6.3 H8.4 C9.4 6.3 9.8 5.4 9.8 4.2 C9.8 2.9 9.3 2.1 8.4 2.1 H7.4 V3.4 C7.4 4.4 6.6 5.1 5.6 5.1 H3.4 C2.6 5.1 2 5.7 2 6.5 V7.8 C2 8.9 3 9.6 5 9.6 Z" fill="#4f9ccc"/></svg><div style="position:absolute;left:72.5px;top:466px;font:normal 10.0px/10.0px 'Liberation Sans', sans-serif;color:#f4f4f4;white-space:pre;transform:scaleX(0.9812);transform-origin:0 0;">P70_SimpleProgressBar.py</div><svg style="position:absolute;left:58px;top:483.65000000000003px;" width="9.5" height="9.5" viewBox="0 0 10 10" fill="none"><path d="M5 0.4 C3 0.4 2.6 1.2 2.6 2.2 V3.2 H5.2 V3.7 H1.6 C0.6 3.7 0.2 4.6 0.2 5.8 C0.2 7.1 0.7 7.9 1.6 7.9 H2.6 V6.6 C2.6 5.6 3.4 4.9 4.4 4.9 H6.6 C7.4 4.9 8 4.3 8 3.5 V2.2 C8 1.1 7 0.4 5 0.4 Z" fill="#4f9ccc"/><path d="M5 9.6 C7 9.6 7.4 8.8 7.4 7.8 V6.8 H4.8 V6.3 H8.4 C9.4 6.3 9.8 5.4 9.8 4.2 C9.8 2.9 9.3 2.1 8.4 2.1 H7.4 V3.4 C7.4 4.4 6.6 5.1 5.6 5.1 H3.4 C2.6 5.1 2 5.7 2 6.5 V7.8 C2 8.9 3 9.6 5 9.6 Z" fill="#4f9ccc"/></svg><div style="position:absolute;left:72.5px;top:484px;font:normal 10.0px/10.0px 'Liberation Sans', sans-serif;color:#f4f4f4;white-space:pre;transform:scaleX(1.0075);transform-origin:0 0;">P71_PythonUnittest.py</div><svg style="position:absolute;left:58px;top:501.25000000000006px;" width="9.5" height="9.5" viewBox="0 0 10 10" fill="none"><path d="M5 0.4 C3 0.4 2.6 1.2 2.6 2.2 V3.2 H5.2 V3.7 H1.6 C0.6 3.7 0.2 4.6 0.2 5.8 C0.2 7.1 0.7 7.9 1.6 7.9 H2.6 V6.6 C2.6 5.6 3.4 4.9 4.4 4.9 H6.6 C7.4 4.9 8 4.3 8 3.5 V2.2 C8 1.1 7 0.4 5 0.4 Z" fill="#4f9ccc"/><path d="M5 9.6 C7 9.6 7.4 8.8 7.4 7.8 V6.8 H4.8 V6.3 H8.4 C9.4 6.3 9.8 5.4 9.8 4.2 C9.8 2.9 9.3 2.1 8.4 2.1 H7.4 V3.4 C7.4 4.4 6.6 5.1 5.6 5.1 H3.4 C2.6 5.1 2 5.7 2 6.5 V7.8 C2 8.9 3 9.6 5 9.6 Z" fill="#4f9ccc"/></svg><div style="position:absolute;left:72.5px;top:502px;font:normal 10.0px/10.0px 'Liberation Sans', sans-serif;color:#f4f4f4;white-space:pre;transform:scaleX(0.9955);transform-origin:0 0;">P72_PythonLambda.py</div><svg style="position:absolute;left:58px;top:518.85px;" width="9.5" height="9.5" viewBox="0 0 10 10" fill="none"><path d="M5 0.4 C3 0.4 2.6 1.2 2.6 2.2 V3.2 H5.2 V3.7 H1.6 C0.6 3.7 0.2 4.6 0.2 5.8 C0.2 7.1 0.7 7.9 1.6 7.9 H2.6 V6.6 C2.6 5.6 3.4 4.9 4.4 4.9 H6.6 C7.4 4.9 8 4.3 8 3.5 V2.2 C8 1.1 7 0.4 5 0.4 Z" fill="#4f9ccc"/><path d="M5 9.6 C7 9.6 7.4 8.8 7.4 7.8 V6.8 H4.8 V6.3 H8.4 C9.4 6.3 9.8 5.4 9.8 4.2 C9.8 2.9 9.3 2.1 8.4 2.1 H7.4 V3.4 C7.4 4.4 6.6 5.1 5.6 5.1 H3.4 C2.6 5.1 2 5.7 2 6.5 V7.8 C2 8.9 3 9.6 5 9.6 Z" fill="#4f9ccc"/></svg><div style="position:absolute;left:72.5px;top:519px;font:normal 10.0px/10.0px 'Liberation Sans', sans-serif;color:#f4f4f4;white-space:pre;transform:scaleX(1.0059);transform-origin:0 0;">P73_SimplePythonEncryption.py</div><svg style="position:absolute;left:58px;top:536.45px;" width="9.5" height="9.5" viewBox="0 0 10 10" fill="none"><path d="M5 0.4 C3 0.4 2.6 1.2 2.6 2.2 V3.2 H5.2 V3.7 H1.6 C0.6 3.7 0.2 4.6 0.2 5.8 C0.2 7.1 0.7 7.9 1.6 7.9 H2.6 V6.6 C2.6 5.6 3.4 4.9 4.4 4.9 H6.6 C7.4 4.9 8 4.3 8 3.5 V2.2 C8 1.1 7 0.4 5 0.4 Z" fill="#4f9ccc"/><path d="M5 9.6 C7 9.6 7.4 8.8 7.4 7.8 V6.8 H4.8 V6.3 H8.4 C9.4 6.3 9.8 5.4 9.8 4.2 C9.8 2.9 9.3 2.1 8.4 2.1 H7.4 V3.4 C7.4 4.4 6.6 5.1 5.6 5.1 H3.4 C2.6 5.1 2 5.7 2 6.5 V7.8 C2 8.9 3 9.6 5 9.6 Z" fill="#4f9ccc"/></svg><div style="position:absolute;left:72.5px;top:537px;font:normal 10.0px/10.0px 'Liberation Sans', sans-serif;color:#f4f4f4;white-space:pre;transform:scaleX(0.9970);transform-origin:0 0;">P74_PythonGenerators.py</div><svg style="position:absolute;left:58px;top:554.0500000000001px;" width="9.5" height="9.5" viewBox="0 0 10 10" fill="none"><path d="M5 0.4 C3 0.4 2.6 1.2 2.6 2.2 V3.2 H5.2 V3.7 H1.6 C0.6 3.7 0.2 4.6 0.2 5.8 C0.2 7.1 0.7 7.9 1.6 7.9 H2.6 V6.6 C2.6 5.6 3.4 4.9 4.4 4.9 H6.6 C7.4 4.9 8 4.3 8 3.5 V2.2 C8 1.1 7 0.4 5 0.4 Z" fill="#4f9ccc"/><path d="M5 9.6 C7 9.6 7.4 8.8 7.4 7.8 V6.8 H4.8 V6.3 H8.4 C9.4 6.3 9.8 5.4 9.8 4.2 C9.8 2.9 9.3 2.1 8.4 2.1 H7.4 V3.4 C7.4 4.4 6.6 5.1 5.6 5.1 H3.4 C2.6 5.1 2 5.7 2 6.5 V7.8 C2 8.9 3 9.6 5 9.6 Z" fill="#4f9ccc"/></svg><div style="position:absolute;left:72.5px;top:554px;font:normal 10.0px/10.0px 'Liberation Sans', sans-serif;color:#f4f4f4;white-space:pre;transform:scaleX(0.9527);transform-origin:0 0;">P75_TicTacToe.py</div><svg style="position:absolute;left:58px;top:571.6500000000001px;" width="9.5" height="9.5" viewBox="0 0 10 10" fill="none"><path d="M5 0.4 C3 0.4 2.6 1.2 2.6 2.2 V3.2 H5.2 V3.7 H1.6 C0.6 3.7 0.2 4.6 0.2 5.8 C0.2 7.1 0.7 7.9 1.6 7.9 H2.6 V6.6 C2.6 5.6 3.4 4.9 4.4 4.9 H6.6 C7.4 4.9 8 4.3 8 3.5 V2.2 C8 1.1 7 0.4 5 0.4 Z" fill="#4f9ccc"/><path d="M5 9.6 C7 9.6 7.4 8.8 7.4 7.8 V6.8 H4.8 V6.3 H8.4 C9.4 6.3 9.8 5.4 9.8 4.2 C9.8 2.9 9.3 2.1 8.4 2.1 H7.4 V3.4 C7.4 4.4 6.6 5.1 5.6 5.1 H3.4 C2.6 5.1 2 5.7 2 6.5 V7.8 C2 8.9 3 9.6 5 9.6 Z" fill="#4f9ccc"/></svg><div style="position:absolute;left:72.5px;top:572px;font:normal 10.0px/10.0px 'Liberation Sans', sans-serif;color:#f4f4f4;white-space:pre;transform:scaleX(0.9715);transform-origin:0 0;">P76_PythonFTP.py</div><svg style="position:absolute;left:58px;top:589.2500000000001px;" width="9.5" height="9.5" viewBox="0 0 10 10" fill="none"><path d="M5 0.4 C3 0.4 2.6 1.2 2.6 2.2 V3.2 H5.2 V3.7 H1.6 C0.6 3.7 0.2 4.6 0.2 5.8 C0.2 7.1 0.7 7.9 1.6 7.9 H2.6 V6.6 C2.6 5.6 3.4 4.9 4.4 4.9 H6.6 C7.4 4.9 8 4.3 8 3.5 V2.2 C8 1.1 7 0.4 5 0.4 Z" fill="#4f9ccc"/><path d="M5 9.6 C7 9.6 7.4 8.8 7.4 7.8 V6.8 H4.8 V6.3 H8.4 C9.4 6.3 9.8 5.4 9.8 4.2 C9.8 2.9 9.3 2.1 8.4 2.1 H7.4 V3.4 C7.4 4.4 6.6 5.1 5.6 5.1 H3.4 C2.6 5.1 2 5.7 2 6.5 V7.8 C2 8.9 3 9.6 5 9.6 Z" fill="#4f9ccc"/></svg><div style="position:absolute;left:72.5px;top:590px;font:normal 10.0px/10.0px 'Liberation Sans', sans-serif;color:#f4f4f4;white-space:pre;transform:scaleX(0.9709);transform-origin:0 0;">P77_FileSearching.py</div><svg style="position:absolute;left:58px;top:606.85px;" width="9.5" height="9.5" viewBox="0 0 10 10" fill="none"><path d="M5 0.4 C3 0.4 2.6 1.2 2.6 2.2 V3.2 H5.2 V3.7 H1.6 C0.6 3.7 0.2 4.6 0.2 5.8 C0.2 7.1 0.7 7.9 1.6 7.9 H2.6 V6.6 C2.6 5.6 3.4 4.9 4.4 4.9 H6.6 C7.4 4.9 8 4.3 8 3.5 V2.2 C8 1.1 7 0.4 5 0.4 Z" fill="#4f9ccc"/><path d="M5 9.6 C7 9.6 7.4 8.8 7.4 7.8 V6.8 H4.8 V6.3 H8.4 C9.4 6.3 9.8 5.4 9.8 4.2 C9.8 2.9 9.3 2.1 8.4 2.1 H7.4 V3.4 C7.4 4.4 6.6 5.1 5.6 5.1 H3.4 C2.6 5.1 2 5.7 2 6.5 V7.8 C2 8.9 3 9.6 5 9.6 Z" fill="#4f9ccc"/></svg><div style="position:absolute;left:72.5px;top:607px;font:normal 10.0px/10.0px 'Liberation Sans', sans-serif;color:#f4f4f4;white-space:pre;transform:scaleX(0.9648);transform-origin:0 0;">P78_HashTable.py</div><svg style="position:absolute;left:58px;top:624.45px;" width="9.5" height="9.5" viewBox="0 0 10 10" fill="none"><path d="M5 0.4 C3 0.4 2.6 1.2 2.6 2.2 V3.2 H5.2 V3.7 H1.6 C0.6 3.7 0.2 4.6 0.2 5.8 C0.2 7.1 0.7 7.9 1.6 7.9 H2.6 V6.6 C2.6 5.6 3.4 4.9 4.4 4.9 H6.6 C7.4 4.9 8 4.3 8 3.5 V2.2 C8 1.1 7 0.4 5 0.4 Z" fill="#4f9ccc"/><path d="M5 9.6 C7 9.6 7.4 8.8 7.4 7.8 V6.8 H4.8 V6.3 H8.4 C9.4 6.3 9.8 5.4 9.8 4.2 C9.8 2.9 9.3 2.1 8.4 2.1 H7.4 V3.4 C7.4 4.4 6.6 5.1 5.6 5.1 H3.4 C2.6 5.1 2 5.7 2 6.5 V7.8 C2 8.9 3 9.6 5 9.6 Z" fill="#4f9ccc"/></svg><div style="position:absolute;left:72.5px;top:625px;font:normal 10.0px/10.0px 'Liberation Sans', sans-serif;color:#f4f4f4;white-space:pre;transform:scaleX(1.0079);transform-origin:0 0;">P79_SimplePythonKeylogger.py</div><svg style="position:absolute;left:58px;top:642.0500000000001px;" width="9.5" height="9.5" viewBox="0 0 10 10" fill="none"><path d="M5 0.4 C3 0.4 2.6 1.2 2.6 2.2 V3.2 H5.2 V3.7 H1.6 C0.6 3.7 0.2 4.6 0.2 5.8 C0.2 7.1 0.7 7.9 1.6 7.9 H2.6 V6.6 C2.6 5.6 3.4 4.9 4.4 4.9 H6.6 C7.4 4.9 8 4.3 8 3.5 V2.2 C8 1.1 7 0.4 5 0.4 Z" fill="#4f9ccc"/><path d="M5 9.6 C7 9.6 7.4 8.8 7.4 7.8 V6.8 H4.8 V6.3 H8.4 C9.4 6.3 9.8 5.4 9.8 4.2 C9.8 2.9 9.3 2.1 8.4 2.1 H7.4 V3.4 C7.4 4.4 6.6 5.1 5.6 5.1 H3.4 C2.6 5.1 2 5.7 2 6.5 V7.8 C2 8.9 3 9.6 5 9.6 Z" fill="#4f9ccc"/></svg><div style="position:absolute;left:72.5px;top:642px;font:normal 10.0px/10.0px 'Liberation Sans', sans-serif;color:#f4f4f4;white-space:pre;transform:scaleX(0.9959);transform-origin:0 0;">P80_SQLAlchemyTutorial.py</div><svg style="position:absolute;left:58px;top:659.6500000000001px;" width="9.5" height="9.5" viewBox="0 0 10 10" fill="none"><path d="M5 0.4 C3 0.4 2.6 1.2 2.6 2.2 V3.2 H5.2 V3.7 H1.6 C0.6 3.7 0.2 4.6 0.2 5.8 C0.2 7.1 0.7 7.9 1.6 7.9 H2.6 V6.6 C2.6 5.6 3.4 4.9 4.4 4.9 H6.6 C7.4 4.9 8 4.3 8 3.5 V2.2 C8 1.1 7 0.4 5 0.4 Z" fill="#4f9ccc"/><path d="M5 9.6 C7 9.6 7.4 8.8 7.4 7.8 V6.8 H4.8 V6.3 H8.4 C9.4 6.3 9.8 5.4 9.8 4.2 C9.8 2.9 9.3 2.1 8.4 2.1 H7.4 V3.4 C7.4 4.4 6.6 5.1 5.6 5.1 H3.4 C2.6 5.1 2 5.7 2 6.5 V7.8 C2 8.9 3 9.6 5 9.6 Z" fill="#4f9ccc"/></svg><div style="position:absolute;left:72.5px;top:660px;font:normal 10.0px/10.0px 'Liberation Sans', sans-serif;color:#f4f4f4;white-space:pre;transform:scaleX(1.0278);transform-origin:0 0;">pyxhook.py</div><svg style="position:absolute;left:58px;top:677.2500000000001px;" width="9.5" height="9.5" viewBox="0 0 10 10" fill="none"><path d="M5 0.4 C3 0.4 2.6 1.2 2.6 2.2 V3.2 H5.2 V3.7 H1.6 C0.6 3.7 0.2 4.6 0.2 5.8 C0.2 7.1 0.7 7.9 1.6 7.9 H2.6 V6.6 C2.6 5.6 3.4 4.9 4.4 4.9 H6.6 C7.4 4.9 8 4.3 8 3.5 V2.2 C8 1.1 7 0.4 5 0.4 Z" fill="#4f9ccc"/><path d="M5 9.6 C7 9.6 7.4 8.8 7.4 7.8 V6.8 H4.8 V6.3 H8.4 C9.4 6.3 9.8 5.4 9.8 4.2 C9.8 2.9 9.3 2.1 8.4 2.1 H7.4 V3.4 C7.4 4.4 6.6 5.1 5.6 5.1 H3.4 C2.6 5.1 2 5.7 2 6.5 V7.8 C2 8.9 3 9.6 5 9.6 Z" fill="#4f9ccc"/></svg><div style="position:absolute;left:72.5px;top:678px;font:normal 10.0px/10.0px 'Liberation Sans', sans-serif;color:#f4f4f4;white-space:pre;transform:scaleX(0.9943);transform-origin:0 0;">TODOApp.py</div><svg style="position:absolute;left:53px;top:696.0px;" width="6" height="10" viewBox="0 0 6 10" fill="none"><path d="M0.8 0.8 L4.8 5 L0.8 9.2" stroke="#f0f0f0" stroke-width="1.1"/></svg><div style="position:absolute;left:65px;top:695px;font:normal 10.0px/10.0px 'Liberation Sans', sans-serif;color:#f4f4f4;white-space:pre;transform:scaleX(1.0012);transform-origin:0 0;">Scripts</div><svg style="position:absolute;left:51px;top:713.2px;" width="9" height="9" viewBox="0 0 9 9" fill="none"><path d="M4.5 0.3 L8.7 4.5 L4.5 8.7 L0.3 4.5 Z" fill="#41535b"/><path d="M4.5 2.5 V6.5" stroke="#000" stroke-width="0.8"/></svg><div style="position:absolute;left:65px;top:713px;font:normal 10.0px/10.0px 'Liberation Sans', sans-serif;color:#f4f4f4;white-space:pre;transform:scaleX(1.0695);transform-origin:0 0;">.gitignore</div><svg style="position:absolute;left:52px;top:728.8000000000001px;" width="8" height="11" viewBox="0 0 8 11" fill="none"><circle cx="4" cy="3" r="2.6" fill="#cbcb41"/><path d="M1.8 5 L1 10.5 L2.8 9.3 L4 10.8 L5.2 9.3 L7 10.5 L6.2 5 Z" fill="#cbcb41"/><circle cx="4" cy="3" r="1.1" fill="#000"/></svg><div style="position:absolute;left:65px;top:730px;font:normal 10.0px/10.0px 'Liberation Sans', sans-serif;color:#f4f4f4;white-space:pre;transform:scaleX(0.8879);transform-origin:0 0;">LICENSE</div><svg style="position:absolute;left:51px;top:748.4000000000001px;" width="10" height="10" viewBox="0 0 10 10" fill="none"><circle cx="5" cy="5" r="4.4" stroke="#519aba" stroke-width="1"/><path d="M5 4.2 V7.8" stroke="#519aba" stroke-width="1.2"/><circle cx="5" cy="2.6" r="0.7" fill="#519aba"/></svg><div style="position:absolute;left:65px;top:748px;font:normal 10.0px/10.0px 'Liberation Sans', sans-serif;color:#f4f4f4;white-space:pre;transform:scaleX(0.9621);transform-origin:0 0;">README.md</div><div style="position:absolute;left:38px;top:762px;width:203px;height:16px;border:1px solid #d58a2e;"></div><svg style="position:absolute;left:51px;top:765.2500000000001px;" width="9.5" height="9.5" viewBox="0 0 10 10" fill="none"><path d="M5 0.4 C3 0.4 2.6 1.2 2.6 2.2 V3.2 H5.2 V3.7 H1.6 C0.6 3.7 0.2 4.6 0.2 5.8 C0.2 7.1 0.7 7.9 1.6 7.9 H2.6 V6.6 C2.6 5.6 3.4 4.9 4.4 4.9 H6.6 C7.4 4.9 8 4.3 8 3.5 V2.2 C8 1.1 7 0.4 5 0.4 Z" fill="#4f9ccc"/><path d="M5 9.6 C7 9.6 7.4 8.8 7.4 7.8 V6.8 H4.8 V6.3 H8.4 C9.4 6.3 9.8 5.4 9.8 4.2 C9.8 2.9 9.3 2.1 8.4 2.1 H7.4 V3.4 C7.4 4.4 6.6 5.1 5.6 5.1 H3.4 C2.6 5.1 2 5.7 2 6.5 V7.8 C2 8.9 3 9.6 5 9.6 Z" fill="#4f9ccc"/></svg><div style="position:absolute;left:65px;top:766px;font:normal 10.0px/10.0px 'Liberation Sans', sans-serif;color:#f4f4f4;white-space:pre;transform:scaleX(1.0442);transform-origin:0 0;">Untitled (1).py</div><div style="position:absolute;left:224px;top:766px;font:normal 10.0px/10.0px 'Liberation Sans', sans-serif;color:#d8d8d8;white-space:pre;">3</div><div style="position:absolute;left:38px;top:780px;width:204px;height:1px;background:#4f8b9f;"></div><svg style="position:absolute;left:44px;top:784px;" width="6" height="10" viewBox="0 0 6 10" fill="none"><path d="M0.8 0.8 L4.8 5 L0.8 9.2" stroke="#f0f0f0" stroke-width="1.1"/></svg><div class="b" style="position:absolute;left:54.5px;top:786px;font:bold 8.8px/8.8px 'Liberation Sans', sans-serif;color:#ffffff;white-space:pre;transform:scaleX(0.9719);transform-origin:0 0;">СТРУКТУРА</div><div style="position:absolute;left:38px;top:797px;width:204px;height:1px;background:#4f8b9f;"></div><svg style="position:absolute;left:44px;top:801.5px;" width="6" height="10" viewBox="0 0 6 10" fill="none"><path d="M0.8 0.8 L4.8 5 L0.8 9.2" stroke="#f0f0f0" stroke-width="1.1"/></svg><div class="b" style="position:absolute;left:54.5px;top:803px;font:bold 8.8px/8.8px 'Liberation Sans', sans-serif;color:#ffffff;white-space:pre;transform:scaleX(0.9793);transform-origin:0 0;">ВРЕМЕННАЯ ШКАЛА</div><div style="position:absolute;left:244px;top:55px;width:1292px;height:1px;background:#4f8b9f;"></div><div style="position:absolute;left:246px;top:31px;width:116px;height:20px;border:1px solid #d58a2e;"></div><div style="position:absolute;left:366px;top:28px;width:1px;height:27px;background:#4f8b9f;"></div><div style="position:absolute;left:471px;top:28px;width:1px;height:27px;background:#4f8b9f;"></div><div style="position:absolute;left:567px;top:28px;width:1px;height:27px;background:#4f8b9f;"></div><div style="position:absolute;left:676px;top:28px;width:1px;height:27px;background:#4f8b9f;"></div><div style="position:absolute;left:790px;top:28px;width:1px;height:27px;background:#4f8b9f;"></div><div style="position:absolute;left:898px;top:28px;width:1px;height:27px;background:#4f8b9f;"></div><div style="position:absolute;left:1002px;top:28px;width:1px;height:27px;background:#4f8b9f;"></div><div style="position:absolute;left:1454px;top:28px;width:1px;height:27px;background:#4f8b9f;"></div><svg style="position:absolute;left:254.5px;top:37.25px;" width="9.5" height="9.5" viewBox="0 0 10 10" fill="none"><path d="M5 0.4 C3 0.4 2.6 1.2 2.6 2.2 V3.2 H5.2 V3.7 H1.6 C0.6 3.7 0.2 4.6 0.2 5.8 C0.2 7.1 0.7 7.9 1.6 7.9 H2.6 V6.6 C2.6 5.6 3.4 4.9 4.4 4.9 H6.6 C7.4 4.9 8 4.3 8 3.5 V2.2 C8 1.1 7 0.4 5 0.4 Z" fill="#4f9ccc"/><path d="M5 9.6 C7 9.6 7.4 8.8 7.4 7.8 V6.8 H4.8 V6.3 H8.4 C9.4 6.3 9.8 5.4 9.8 4.2 C9.8 2.9 9.3 2.1 8.4 2.1 H7.4 V3.4 C7.4 4.4 6.6 5.1 5.6 5.1 H3.4 C2.6 5.1 2 5.7 2 6.5 V7.8 C2 8.9 3 9.6 5 9.6 Z" fill="#4f9ccc"/></svg><div style="position:absolute;left:268.7px;top:38px;font:normal 10.2px/10.2px 'Liberation Sans', sans-serif;color:#f4f4f4;white-space:pre;transform:scaleX(1.0280);transform-origin:0 0;">Untitled (1).py</div><div style="position:absolute;left:337.5px;top:38px;font:normal 10.0px/10.0px 'Liberation Sans', sans-serif;color:#d8d8d8;white-space:pre;">3</div><svg style="position:absolute;left:350px;top:38.5px;" width="9" height="9" viewBox="0 0 9 9" fill="none"><path d="M0.7 0.7 L8.3 8.3 M8.3 0.7 L0.7 8.3" stroke="#f0f0f0" stroke-width="1.2"/></svg><svg style="position:absolute;left:377px;top:37px;" width="10" height="10" viewBox="0 0 10 10" fill="none"><circle cx="5" cy="5" r="4.4" stroke="#519aba" stroke-width="1"/><path d="M5 4.2 V7.8" stroke="#519aba" stroke-width="1.2"/><circle cx="5" cy="2.6" r="0.7" fill="#519aba"/></svg><div style="position:absolute;left:391.7px;top:38px;font:normal 10.0px/10.0px 'Liberation Sans', sans-serif;color:#f4f4f4;white-space:pre;transform:scaleX(0.9671);transform-origin:0 0;">README.md</div><svg style="position:absolute;left:484.5px;top:36.5px;" width="8" height="11" viewBox="0 0 8 11" fill="none"><circle cx="4" cy="3" r="2.6" fill="#cbcb41"/><path d="M1.8 5 L1 10.5 L2.8 9.3 L4 10.8 L5.2 9.3 L7 10.5 L6.2 5 Z" fill="#cbcb41"/><circle cx="4" cy="3" r="1.1" fill="#000"/></svg><div style="position:absolute;left:498px;top:38px;font:normal 10.0px/10.0px 'Liberation Sans', sans-serif;color:#f4f4f4;white-space:pre;transform:scaleX(0.8879);transform-origin:0 0;">LICENSE</div><svg style="position:absolute;left:579.8px;top:37.25px;" width="9.5" height="9.5" viewBox="0 0 10 10" fill="none"><path d="M5 0.4 C3 0.4 2.6 1.2 2.6 2.2 V3.2 H5.2 V3.7 H1.6 C0.6 3.7 0.2 4.6 0.2 5.8 C0.2 7.1 0.7 7.9 1.6 7.9 H2.6 V6.6 C2.6 5.6 3.4 4.9 4.4 4.9 H6.6 C7.4 4.9 8 4.3 8 3.5 V2.2 C8 1.1 7 0.4 5 0.4 Z" fill="#4f9ccc"/><path d="M5 9.6 C7 9.6 7.4 8.8 7.4 7.8 V6.8 H4.8 V6.3 H8.4 C9.4 6.3 9.8 5.4 9.8 4.2 C9.8 2.9 9.3 2.1 8.4 2.1 H7.4 V3.4 C7.4 4.4 6.6 5.1 5.6 5.1 H3.4 C2.6 5.1 2 5.7 2 6.5 V7.8 C2 8.9 3 9.6 5 9.6 Z" fill="#4f9ccc"/></svg><div style="position:absolute;left:594.4px;top:38px;font:normal 10.0px/10.0px 'Liberation Sans', sans-serif;color:#f4f4f4;white-space:pre;transform:scaleX(1.0336);transform-origin:0 0;">Chatbot.py</div><div style="position:absolute;left:648.5px;top:38px;font:normal 10.0px/10.0px 'Liberation Sans', sans-serif;color:#d8d8d8;white-space:pre;">2</div><svg style="position:absolute;left:690.5px;top:37px;" width="8" height="9" viewBox="0 0 8 9" fill="none"><path d="M0 1 H7 M0 3.5 H5.5 M0 6 H7 M0 8.5 H4" stroke="#d8d8d8" stroke-width="1"/></svg><div style="position:absolute;left:702.8px;top:38px;font:normal 10.0px/10.0px 'Liberation Sans', sans-serif;color:#f4f4f4;white-space:pre;transform:scaleX(1.0018);transform-origin:0 0;">examplePickle</div><div style="position:absolute;left:802px;top:38px;font:normal 9.5px/9.5px 'Liberation Sans', sans-serif;color:#cbcb41;white-space:pre;">{</div><div style="position:absolute;left:807.6px;top:38px;font:normal 9.5px/9.5px 'Liberation Sans', sans-serif;color:#cbcb41;white-space:pre;">}</div><div style="position:absolute;left:816px;top:38px;font:normal 10.0px/10.0px 'Liberation Sans', sans-serif;color:#f4f4f4;white-space:pre;transform:scaleX(1.0149);transform-origin:0 0;">example.json</div><svg style="position:absolute;left:910px;top:37px;" width="10" height="10" viewBox="0 0 10 10" fill="none"><rect x="0" y="0" width="10" height="10" fill="#7fb43c"/><rect x="2" y="2.5" width="6" height="5.5" stroke="#4a7420" stroke-width="0.8"/><path d="M5 2.5 V8 M2 5.2 H8" stroke="#4a7420" stroke-width="0.7"/></svg><div style="position:absolute;left:924.5px;top:38px;font:normal 10.0px/10.0px 'Liberation Sans', sans-serif;color:#f4f4f4;white-space:pre;transform:scaleX(0.9968);transform-origin:0 0;">example.csv</div><svg style="position:absolute;left:1461px;top:36px;" width="12" height="13" viewBox="0 0 12 13" fill="none"><path d="M1.3 1.6 L9.3 6.6 L1.3 11.6 Z" stroke="#f0f0f0" stroke-width="1.2" stroke-linejoin="round"/></svg><svg style="position:absolute;left:1476px;top:40px;" width="7" height="5" viewBox="0 0 7 5" fill="none"><path d="M0.5 0.5 L3.5 3.8 L6.5 0.5" stroke="#e0e0e0" stroke-width="1"/></svg><svg style="position:absolute;left:1491px;top:36px;" width="13" height="12" viewBox="0 0 13 12" fill="none"><rect x="0.6" y="0.6" width="11.8" height="10.8" rx="0.8" stroke="#f0f0f0" stroke-width="1.1"/><path d="M6.5 0.6 V11.4" stroke="#f0f0f0" stroke-width="1.1"/></svg><div style="position:absolute;left:1513.0px;top:41.5px;width:1.8px;height:1.8px;background:#f0f0f0;"></div><div style="position:absolute;left:1517.2px;top:41.5px;width:1.8px;height:1.8px;background:#f0f0f0;"></div><div style="position:absolute;left:1521.4px;top:41.5px;width:1.8px;height:1.8px;background:#f0f0f0;"></div><svg style="position:absolute;left:259.6px;top:59.75px;" width="9.5" height="9.5" viewBox="0 0 10 10" fill="none"><path d="M5 0.4 C3 0.4 2.6 1.2 2.6 2.2 V3.2 H5.2 V3.7 H1.6 C0.6 3.7 0.2 4.6 0.2 5.8 C0.2 7.1 0.7 7.9 1.6 7.9 H2.6 V6.6 C2.6 5.6 3.4 4.9 4.4 4.9 H6.6 C7.4 4.9 8 4.3 8 3.5 V2.2 C8 1.1 7 0.4 5 0.4 Z" fill="#4f9ccc"/><path d="M5 9.6 C7 9.6 7.4 8.8 7.4 7.8 V6.8 H4.8 V6.3 H8.4 C9.4 6.3 9.8 5.4 9.8 4.2 C9.8 2.9 9.3 2.1 8.4 2.1 H7.4 V3.4 C7.4 4.4 6.6 5.1 5.6 5.1 H3.4 C2.6 5.1 2 5.7 2 6.5 V7.8 C2 8.9 3 9.6 5 9.6 Z" fill="#4f9ccc"/></svg><div style="position:absolute;left:273.7px;top:60px;font:normal 10.0px/10.0px 'Liberation Sans', sans-serif;color:#e8e8e8;white-space:pre;">Untitled (1).py</div><svg style="position:absolute;left:343px;top:60px;" width="6" height="9" viewBox="0 0 6 9" fill="none"><path d="M0.8 0.8 L4.5 4.5 L0.8 8.2" stroke="#e0e0e0" stroke-width="1"/></svg><div style="position:absolute;left:244px;top:73px;width:1292px;height:1px;background:#4f8b9f;"></div><div style="position:absolute;left:298px;top:74px;width:1132px;height:1px;background:#d58a2e;"></div><div style="position:absolute;left:298px;top:88px;width:1132px;height:1px;background:#d58a2e;"></div><div style="position:absolute;left:298px;top:74px;width:1px;height:15px;background:#d58a2e;"></div><div class="m" style="position:absolute;left:200px;width:77.5px;text-align:right;top:77px;font:normal 10.3px/10.3px 'Liberation Mono', monospace;color:#f38518;white-space:pre">1</div><div class="m" style="position:absolute;left:298.3px;top:77px;font:normal 10.3px/10.3px 'Liberation Mono', monospace;color:#ffffff;white-space:pre;"><span style="color:#7ca668">#!/usr/bin/env python</span></div><div class="m" style="position:absolute;left:200px;width:77.5px;text-align:right;top:92px;font:normal 10.3px/10.3px 'Liberation Mono', monospace;color:#f4f4f4;white-space:pre">2</div><div class="m" style="position:absolute;left:298.3px;top:92px;font:normal 10.3px/10.3px 'Liberation Mono', monospace;color:#ffffff;white-space:pre;"><span style="color:#7ca668"># coding: utf-8</span></div><div class="m" style="position:absolute;left:200px;width:77.5px;text-align:right;top:107px;font:normal 10.3px/10.3px 'Liberation Mono', monospace;color:#f4f4f4;white-space:pre">3</div><div class="m" style="position:absolute;left:200px;width:77.5px;text-align:right;top:122px;font:normal 10.3px/10.3px 'Liberation Mono', monospace;color:#f4f4f4;white-space:pre">4</div><div class="m" style="position:absolute;left:298.3px;top:122px;font:normal 10.3px/10.3px 'Liberation Mono', monospace;color:#ffffff;white-space:pre;"><span style="color:#7ca668"># # File Handling using Python</span></div><div class="m" style="position:absolute;left:200px;width:77.5px;text-align:right;top:138px;font:normal 10.3px/10.3px 'Liberation Mono', monospace;color:#f4f4f4;white-space:pre">5</div><div class="m" style="position:absolute;left:200px;width:77.5px;text-align:right;top:153px;font:normal 10.3px/10.3px 'Liberation Mono', monospace;color:#f4f4f4;white-space:pre">6</div><div class="m" style="position:absolute;left:298.3px;top:153px;font:normal 10.3px/10.3px 'Liberation Mono', monospace;color:#ffffff;white-space:pre;"><span style="color:#7ca668"># In[1]:</span></div><div class="m" style="position:absolute;left:200px;width:77.5px;text-align:right;top:168px;font:normal 10.3px/10.3px 'Liberation Mono', monospace;color:#f4f4f4;white-space:pre">7</div><div class="m" style="position:absolute;left:200px;width:77.5px;text-align:right;top:183px;font:normal 10.3px/10.3px 'Liberation Mono', monospace;color:#f4f4f4;white-space:pre">8</div><div class="m" style="position:absolute;left:200px;width:77.5px;text-align:right;top:198px;font:normal 10.3px/10.3px 'Liberation Mono', monospace;color:#f4f4f4;white-space:pre">9</div><div class="m" style="position:absolute;left:298.3px;top:198px;font:normal 10.3px/10.3px 'Liberation Mono', monospace;color:#ffffff;white-space:pre;"><span style="color:#7ca668"># open(filename, mode)</span></div><div class="m" style="position:absolute;left:200px;width:77.5px;text-align:right;top:214px;font:normal 10.3px/10.3px 'Liberation Mono', monospace;color:#f4f4f4;white-space:pre">10</div><div class="m" style="position:absolute;left:200px;width:77.5px;text-align:right;top:229px;font:normal 10.3px/10.3px 'Liberation Mono', monospace;color:#f4f4f4;white-space:pre">11</div><div class="m" style="position:absolute;left:298.3px;top:229px;font:normal 10.3px/10.3px 'Liberation Mono', monospace;color:#ffffff;white-space:pre;"><span style="color:#7ca668"># r - reading</span></div><div class="m" style="position:absolute;left:200px;width:77.5px;text-align:right;top:244px;font:normal 10.3px/10.3px 'Liberation Mono', monospace;color:#f4f4f4;white-space:pre">12</div><div class="m" style="position:absolute;left:298.3px;top:244px;font:normal 10.3px/10.3px 'Liberation Mono', monospace;color:#ffffff;white-space:pre;"><span style="color:#7ca668"># w - writing</span></div><div class="m" style="position:absolute;left:200px;width:77.5px;text-align:right;top:259px;font:normal 10.3px/10.3px 'Liberation Mono', monospace;color:#f4f4f4;white-space:pre">13</div><div class="m" style="position:absolute;left:298.3px;top:259px;font:normal 10.3px/10.3px 'Liberation Mono', monospace;color:#ffffff;white-space:pre;"><span style="color:#7ca668"># a - appending</span></div><div class="m" style="position:absolute;left:200px;width:77.5px;text-align:right;top:274px;font:normal 10.3px/10.3px 'Liberation Mono', monospace;color:#f4f4f4;white-space:pre">14</div><div class="m" style="position:absolute;left:200px;width:77.5px;text-align:right;top:290px;font:normal 10.3px/10.3px 'Liberation Mono', monospace;color:#f4f4f4;white-space:pre">15</div><div class="m" style="position:absolute;left:200px;width:77.5px;text-align:right;top:305px;font:normal 10.3px/10.3px 'Liberation Mono', monospace;color:#f4f4f4;white-space:pre">16</div><div class="m" style="position:absolute;left:298.3px;top:305px;font:normal 10.3px/10.3px 'Liberation Mono', monospace;color:#ffffff;white-space:pre;"><span style="color:#7ca668"># In[7]:</span></div><div class="m" style="position:absolute;left:200px;width:77.5px;text-align:right;top:320px;font:normal 10.3px/10.3px 'Liberation Mono', monospace;color:#f4f4f4;white-space:pre">17</div><div class="m" style="position:absolute;left:200px;width:77.5px;text-align:right;top:335px;font:normal 10.3px/10.3px 'Liberation Mono', monospace;color:#f4f4f4;white-space:pre">18</div><div class="m" style="position:absolute;left:200px;width:77.5px;text-align:right;top:350px;font:normal 10.3px/10.3px 'Liberation Mono', monospace;color:#f4f4f4;white-space:pre">19</div><div class="m" style="position:absolute;left:298.3px;top:350px;font:normal 10.3px/10.3px 'Liberation Mono', monospace;color:#ffffff;white-space:pre;"><span style="color:#9cdcfe">file</span><span style="color:#d4d4d4"> = </span><span style="color:#dcdcaa">open</span><span style="color:#ffd700">(</span><span style="color:#ce9178">'social.txt'</span><span style="color:#d4d4d4">, </span><span style="color:#ce9178">'r'</span><span style="color:#ffd700">)</span></div><div class="m" style="position:absolute;left:200px;width:77.5px;text-align:right;top:366px;font:normal 10.3px/10.3px 'Liberation Mono', monospace;color:#f4f4f4;white-space:pre">20</div><div class="m" style="position:absolute;left:298.3px;top:366px;font:normal 10.3px/10.3px 'Liberation Mono', monospace;color:#ffffff;white-space:pre;"><span style="color:#9cdcfe">data</span><span style="color:#d4d4d4"> = </span><span style="color:#9cdcfe">file</span><span style="color:#d4d4d4">.</span><span style="color:#dcdcaa">read</span><span style="color:#ffd700">()</span></div><div class="m" style="position:absolute;left:200px;width:77.5px;text-align:right;top:381px;font:normal 10.3px/10.3px 'Liberation Mono', monospace;color:#f4f4f4;white-space:pre">21</div><div class="m" style="position:absolute;left:200px;width:77.5px;text-align:right;top:396px;font:normal 10.3px/10.3px 'Liberation Mono', monospace;color:#f4f4f4;white-space:pre">22</div><div class="m" style="position:absolute;left:298.3px;top:396px;font:normal 10.3px/10.3px 'Liberation Mono', monospace;color:#ffffff;white-space:pre;"><span style="color:#7ca668"># if for</span></div><div class="m" style="position:absolute;left:200px;width:77.5px;text-align:right;top:411px;font:normal 10.3px/10.3px 'Liberation Mono', monospace;color:#f4f4f4;white-space:pre">23</div><div class="m" style="position:absolute;left:200px;width:77.5px;text-align:right;top:426px;font:normal 10.3px/10.3px 'Liberation Mono', monospace;color:#f4f4f4;white-space:pre">24</div><div class="m" style="position:absolute;left:298.3px;top:426px;font:normal 10.3px/10.3px 'Liberation Mono', monospace;color:#ffffff;white-space:pre;"><span style="color:#9cdcfe">file</span><span style="color:#d4d4d4">.</span><span style="color:#dcdcaa">close</span><span style="color:#ffd700">()</span></div><div class="m" style="position:absolute;left:200px;width:77.5px;text-align:right;top:442px;font:normal 10.3px/10.3px 'Liberation Mono', monospace;color:#f4f4f4;white-space:pre">25</div><div class="m" style="position:absolute;left:200px;width:77.5px;text-align:right;top:457px;font:normal 10.3px/10.3px 'Liberation Mono', monospace;color:#f4f4f4;white-space:pre">26</div><div class="m" style="position:absolute;left:298.3px;top:457px;font:normal 10.3px/10.3px 'Liberation Mono', monospace;color:#ffffff;white-space:pre;"><span style="color:#dcdcaa">print</span><span style="color:#ffd700">(</span><span style="color:#9cdcfe">file</span><span style="color:#d4d4d4">.</span><span style="color:#9cdcfe">closed</span><span style="color:#ffd700">)</span></div><div class="m" style="position:absolute;left:200px;width:77.5px;text-align:right;top:472px;font:normal 10.3px/10.3px 'Liberation Mono', monospace;color:#f4f4f4;white-space:pre">27</div><div class="m" style="position:absolute;left:200px;width:77.5px;text-align:right;top:487px;font:normal 10.3px/10.3px 'Liberation Mono', monospace;color:#f4f4f4;white-space:pre">28</div><div class="m" style="position:absolute;left:200px;width:77.5px;text-align:right;top:502px;font:normal 10.3px/10.3px 'Liberation Mono', monospace;color:#f4f4f4;white-space:pre">29</div><div class="m" style="position:absolute;left:298.3px;top:502px;font:normal 10.3px/10.3px 'Liberation Mono', monospace;color:#ffffff;white-space:pre;"><span style="color:#7ca668"># In[11]:</span></div><div class="m" style="position:absolute;left:200px;width:77.5px;text-align:right;top:518px;font:normal 10.3px/10.3px 'Liberation Mono', monospace;color:#f4f4f4;white-space:pre">30</div><div class="m" style="position:absolute;left:200px;width:77.5px;text-align:right;top:533px;font:normal 10.3px/10.3px 'Liberation Mono', monospace;color:#f4f4f4;white-space:pre">31</div><div class="m" style="position:absolute;left:200px;width:77.5px;text-align:right;top:548px;font:normal 10.3px/10.3px 'Liberation Mono', monospace;color:#f4f4f4;white-space:pre">32</div><div class="m" style="position:absolute;left:298.3px;top:548px;font:normal 10.3px/10.3px 'Liberation Mono', monospace;color:#ffffff;white-space:pre;"><span style="color:#7ca668"># context manager</span></div><div class="m" style="position:absolute;left:200px;width:77.5px;text-align:right;top:563px;font:normal 10.3px/10.3px 'Liberation Mono', monospace;color:#f4f4f4;white-space:pre">33</div><div class="m" style="position:absolute;left:200px;width:77.5px;text-align:right;top:578px;font:normal 10.3px/10.3px 'Liberation Mono', monospace;color:#f4f4f4;white-space:pre">34</div><div class="m" style="position:absolute;left:298.3px;top:578px;font:normal 10.3px/10.3px 'Liberation Mono', monospace;color:#ffffff;white-space:pre;"><span style="color:#c586c0">with</span><span style="color:#d4d4d4"> </span><span style="color:#dcdcaa">open</span><span style="color:#ffd700">(</span><span style="color:#ce9178">'social.txt'</span><span style="color:#d4d4d4">, </span><span style="color:#ce9178">'r'</span><span style="color:#ffd700">)</span><span style="color:#d4d4d4"> </span><span style="color:#c586c0">as</span><span style="color:#d4d4d4"> </span><span style="color:#9cdcfe">file</span><span style="color:#d4d4d4">:</span></div><div class="m" style="position:absolute;left:200px;width:77.5px;text-align:right;top:594px;font:normal 10.3px/10.3px 'Liberation Mono', monospace;color:#f4f4f4;white-space:pre">35</div><div class="m" style="position:absolute;left:298.3px;top:594px;font:normal 10.3px/10.3px 'Liberation Mono', monospace;color:#ffffff;white-space:pre;"><span style="color:#d4d4d4">    </span><span style="color:#9cdcfe">data</span><span style="color:#d4d4d4"> = </span><span style="color:#9cdcfe">file</span><span style="color:#d4d4d4">.</span><span style="color:#dcdcaa">read</span><span style="color:#ffd700">()</span></div><div class="m" style="position:absolute;left:200px;width:77.5px;text-align:right;top:609px;font:normal 10.3px/10.3px 'Liberation Mono', monospace;color:#f4f4f4;white-space:pre">36</div><div class="m" style="position:absolute;left:200px;width:77.5px;text-align:right;top:624px;font:normal 10.3px/10.3px 'Liberation Mono', monospace;color:#f4f4f4;white-space:pre">37</div><div class="m" style="position:absolute;left:298.3px;top:624px;font:normal 10.3px/10.3px 'Liberation Mono', monospace;color:#ffffff;white-space:pre;"><span style="color:#dcdcaa">print</span><span style="color:#ffd700">(</span><span style="color:#9cdcfe">file</span><span style="color:#d4d4d4">.</span><span style="color:#9cdcfe">closed</span><span style="color:#ffd700">)</span></div><div class="m" style="position:absolute;left:200px;width:77.5px;text-align:right;top:639px;font:normal 10.3px/10.3px 'Liberation Mono', monospace;color:#f4f4f4;white-space:pre">38</div><div class="m" style="position:absolute;left:200px;width:77.5px;text-align:right;top:654px;font:normal 10.3px/10.3px 'Liberation Mono', monospace;color:#f4f4f4;white-space:pre">39</div><div class="m" style="position:absolute;left:200px;width:77.5px;text-align:right;top:670px;font:normal 10.3px/10.3px 'Liberation Mono', monospace;color:#f4f4f4;white-space:pre">40</div><div class="m" style="position:absolute;left:298.3px;top:670px;font:normal 10.3px/10.3px 'Liberation Mono', monospace;color:#ffffff;white-space:pre;"><span style="color:#7ca668"># In[15]:</span></div><div class="m" style="position:absolute;left:200px;width:77.5px;text-align:right;top:685px;font:normal 10.3px/10.3px 'Liberation Mono', monospace;color:#f4f4f4;white-space:pre">41</div><div class="m" style="position:absolute;left:200px;width:77.5px;text-align:right;top:700px;font:normal 10.3px/10.3px 'Liberation Mono', monospace;color:#f4f4f4;white-space:pre">42</div><div class="m" style="position:absolute;left:200px;width:77.5px;text-align:right;top:715px;font:normal 10.3px/10.3px 'Liberation Mono', monospace;color:#f4f4f4;white-space:pre">43</div><div class="m" style="position:absolute;left:298.3px;top:715px;font:normal 10.3px/10.3px 'Liberation Mono', monospace;color:#ffffff;white-space:pre;"><span style="color:#c586c0">with</span><span style="color:#d4d4d4"> </span><span style="color:#dcdcaa">open</span><span style="color:#ffd700">(</span><span style="color:#ce9178">'something.txt'</span><span style="color:#d4d4d4">, </span><span style="color:#ce9178">'a'</span><span style="color:#ffd700">)</span><span style="color:#d4d4d4"> </span><span style="color:#c586c0">as</span><span style="color:#d4d4d4"> </span><span style="color:#9cdcfe">file</span><span style="color:#d4d4d4">:</span></div><div class="m" style="position:absolute;left:200px;width:77.5px;text-align:right;top:730px;font:normal 10.3px/10.3px 'Liberation Mono', monospace;color:#f4f4f4;white-space:pre">44</div><div class="m" style="position:absolute;left:298.3px;top:730px;font:normal 10.3px/10.3px 'Liberation Mono', monospace;color:#ffffff;white-space:pre;"><span style="color:#d4d4d4">    </span><span style="color:#9cdcfe">file</span><span style="color:#d4d4d4">.</span><span style="color:#dcdcaa">write</span><span style="color:#ffd700">(</span><span style="color:#ce9178">'MMCOE - yethe bahutanche hith!'</span><span style="color:#ffd700">)</span></div><div class="m" style="position:absolute;left:200px;width:77.5px;text-align:right;top:746px;font:normal 10.3px/10.3px 'Liberation Mono', monospace;color:#f4f4f4;white-space:pre">45</div><div class="m" style="position:absolute;left:200px;width:77.5px;text-align:right;top:761px;font:normal 10.3px/10.3px 'Liberation Mono', monospace;color:#f4f4f4;white-space:pre">46</div><div class="m" style="position:absolute;left:200px;width:77.5px;text-align:right;top:776px;font:normal 10.3px/10.3px 'Liberation Mono', monospace;color:#f4f4f4;white-space:pre">47</div><div class="m" style="position:absolute;left:298.3px;top:776px;font:normal 10.3px/10.3px 'Liberation Mono', monospace;color:#ffffff;white-space:pre;"><span style="color:#7ca668"># In[18]:</span></div><div class="m" style="position:absolute;left:200px;width:77.5px;text-align:right;top:791px;font:normal 10.3px/10.3px 'Liberation Mono', monospace;color:#f4f4f4;white-space:pre">48</div><div class="m" style="position:absolute;left:200px;width:77.5px;text-align:right;top:806px;font:normal 10.3px/10.3px 'Liberation Mono', monospace;color:#f4f4f4;white-space:pre">49</div><div style="position:absolute;left:297px;top:591px;width:1px;height:15px;background:#e0e0e0;"></div><div style="position:absolute;left:297px;top:728px;width:1px;height:15px;background:#e0e0e0;"></div><div style="position:absolute;left:244px;top:815px;width:1292px;height:15px;background:#000;"></div><div style="position:absolute;left:0px;top:815px;width:1536px;height:1px;background:#4f8b9f;"></div><svg style="position:absolute;left:1436px;top:70px;opacity:0.45" width="90" height="285" viewBox="0 0 90 285" fill="none"><rect x="0.00" y="3.35" width="11.48" height="1.1" fill="#7ca668"/><rect x="12.30" y="3.35" width="4.92" height="1.1" fill="#7ca668"/><rect x="0.00" y="4.96" width="0.82" height="1.1" fill="#7ca668"/><rect x="1.64" y="4.96" width="5.74" height="1.1" fill="#7ca668"/><rect x="8.20" y="4.96" width="4.10" height="1.1" fill="#7ca668"/><rect x="0.00" y="8.17" width="0.82" height="1.1" fill="#7ca668"/><rect x="1.64" y="8.17" width="0.82" height="1.1" fill="#7ca668"/><rect x="3.28" y="8.17" width="3.28" height="1.1" fill="#7ca668"/><rect x="7.38" y="8.17" width="6.56" height="1.1" fill="#7ca668"/><rect x="14.76" y="8.17" width="4.10" height="1.1" fill="#7ca668"/><rect x="19.68" y="8.17" width="4.92" height="1.1" fill="#7ca668"/><rect x="0.00" y="11.38" width="0.82" height="1.1" fill="#7ca668"/><rect x="1.64" y="11.38" width="4.92" height="1.1" fill="#7ca668"/><rect x="0.00" y="16.19" width="0.82" height="1.1" fill="#7ca668"/><rect x="1.64" y="16.19" width="11.48" height="1.1" fill="#7ca668"/><rect x="13.94" y="16.19" width="4.10" height="1.1" fill="#7ca668"/><rect x="0.00" y="19.40" width="0.82" height="1.1" fill="#7ca668"/><rect x="1.64" y="19.40" width="0.82" height="1.1" fill="#7ca668"/><rect x="3.28" y="19.40" width="0.82" height="1.1" fill="#7ca668"/><rect x="4.92" y="19.40" width="5.74" height="1.1" fill="#7ca668"/><rect x="0.00" y="21.01" width="0.82" height="1.1" fill="#7ca668"/><rect x="1.64" y="21.01" width="0.82" height="1.1" fill="#7ca668"/><rect x="3.28" y="21.01" width="0.82" height="1.1" fill="#7ca668"/><rect x="4.92" y="21.01" width="5.74" height="1.1" fill="#7ca668"/><rect x="0.00" y="22.61" width="0.82" height="1.1" fill="#7ca668"/><rect x="1.64" y="22.61" width="0.82" height="1.1" fill="#7ca668"/><rect x="3.28" y="22.61" width="0.82" height="1.1" fill="#7ca668"/><rect x="4.92" y="22.61" width="7.38" height="1.1" fill="#7ca668"/><rect x="0.00" y="27.43" width="0.82" height="1.1" fill="#7ca668"/><rect x="1.64" y="27.43" width="4.92" height="1.1" fill="#7ca668"/><rect x="0.00" y="32.24" width="3.28" height="1.1" fill="#9cdcfe"/><rect x="4.10" y="32.24" width="0.82" height="1.1" fill="#d4d4d4"/><rect x="5.74" y="32.24" width="3.28" height="1.1" fill="#dcdcaa"/><rect x="9.02" y="32.24" width="0.82" height="1.1" fill="#ffd700"/><rect x="9.84" y="32.24" width="9.84" height="1.1" fill="#ce9178"/><rect x="19.68" y="32.24" width="0.82" height="1.1" fill="#d4d4d4"/><rect x="21.32" y="32.24" width="2.46" height="1.1" fill="#ce9178"/><rect x="23.78" y="32.24" width="0.82" height="1.1" fill="#ffd700"/><rect x="0.00" y="33.85" width="3.28" height="1.1" fill="#9cdcfe"/><rect x="4.10" y="33.85" width="0.82" height="1.1" fill="#d4d4d4"/><rect x="5.74" y="33.85" width="3.28" height="1.1" fill="#9cdcfe"/><rect x="9.02" y="33.85" width="0.82" height="1.1" fill="#d4d4d4"/><rect x="9.84" y="33.85" width="3.28" height="1.1" fill="#dcdcaa"/><rect x="13.12" y="33.85" width="1.64" height="1.1" fill="#ffd700"/><rect x="0.00" y="37.06" width="0.82" height="1.1" fill="#7ca668"/><rect x="1.64" y="37.06" width="1.64" height="1.1" fill="#7ca668"/><rect x="4.10" y="37.06" width="2.46" height="1.1" fill="#7ca668"/><rect x="0.00" y="40.27" width="3.28" height="1.1" fill="#9cdcfe"/><rect x="3.28" y="40.27" width="0.82" height="1.1" fill="#d4d4d4"/><rect x="4.10" y="40.27" width="4.10" height="1.1" fill="#dcdcaa"/><rect x="8.20" y="40.27" width="1.64" height="1.1" fill="#ffd700"/><rect x="0.00" y="43.48" width="4.10" height="1.1" fill="#dcdcaa"/><rect x="4.10" y="43.48" width="0.82" height="1.1" fill="#ffd700"/><rect x="4.92" y="43.48" width="3.28" height="1.1" fill="#9cdcfe"/><rect x="8.20" y="43.48" width="0.82" height="1.1" fill="#d4d4d4"/><rect x="9.02" y="43.48" width="4.92" height="1.1" fill="#9cdcfe"/><rect x="13.94" y="43.48" width="0.82" height="1.1" fill="#ffd700"/><rect x="0.00" y="48.29" width="0.82" height="1.1" fill="#7ca668"/><rect x="1.64" y="48.29" width="5.74" height="1.1" fill="#7ca668"/><rect x="0.00" y="53.11" width="0.82" height="1.1" fill="#7ca668"/><rect x="1.64" y="53.11" width="5.74" height="1.1" fill="#7ca668"/><rect x="8.20" y="53.11" width="5.74" height="1.1" fill="#7ca668"/><rect x="0.00" y="56.32" width="3.28" height="1.1" fill="#c586c0"/><rect x="4.10" y="56.32" width="3.28" height="1.1" fill="#dcdcaa"/><rect x="7.38" y="56.32" width="0.82" height="1.1" fill="#ffd700"/><rect x="8.20" y="56.32" width="9.84" height="1.1" fill="#ce9178"/><rect x="18.04" y="56.32" width="0.82" height="1.1" fill="#d4d4d4"/><rect x="19.68" y="56.32" width="2.46" height="1.1" fill="#ce9178"/><rect x="22.14" y="56.32" width="0.82" height="1.1" fill="#ffd700"/><rect x="23.78" y="56.32" width="1.64" height="1.1" fill="#c586c0"/><rect x="26.24" y="56.32" width="3.28" height="1.1" fill="#9cdcfe"/><rect x="29.52" y="56.32" width="0.82" height="1.1" fill="#d4d4d4"/><rect x="3.28" y="57.92" width="3.28" height="1.1" fill="#9cdcfe"/><rect x="7.38" y="57.92" width="0.82" height="1.1" fill="#d4d4d4"/><rect x="9.02" y="57.92" width="3.28" height="1.1" fill="#9cdcfe"/><rect x="12.30" y="57.92" width="0.82" height="1.1" fill="#d4d4d4"/><rect x="13.12" y="57.92" width="3.28" height="1.1" fill="#dcdcaa"/><rect x="16.40" y="57.92" width="1.64" height="1.1" fill="#ffd700"/><rect x="0.00" y="61.13" width="4.10" height="1.1" fill="#dcdcaa"/><rect x="4.10" y="61.13" width="0.82" height="1.1" fill="#ffd700"/><rect x="4.92" y="61.13" width="3.28" height="1.1" fill="#9cdcfe"/><rect x="8.20" y="61.13" width="0.82" height="1.1" fill="#d4d4d4"/><rect x="9.02" y="61.13" width="4.92" height="1.1" fill="#9cdcfe"/><rect x="13.94" y="61.13" width="0.82" height="1.1" fill="#ffd700"/><rect x="0.00" y="65.94" width="0.82" height="1.1" fill="#7ca668"/><rect x="1.64" y="65.94" width="5.74" height="1.1" fill="#7ca668"/><rect x="0.00" y="70.76" width="3.28" height="1.1" fill="#c586c0"/><rect x="4.10" y="70.76" width="3.28" height="1.1" fill="#dcdcaa"/><rect x="7.38" y="70.76" width="0.82" height="1.1" fill="#ffd700"/><rect x="8.20" y="70.76" width="12.30" height="1.1" fill="#ce9178"/><rect x="20.50" y="70.76" width="0.82" height="1.1" fill="#d4d4d4"/><rect x="22.14" y="70.76" width="2.46" height="1.1" fill="#ce9178"/><rect x="24.60" y="70.76" width="0.82" height="1.1" fill="#ffd700"/><rect x="26.24" y="70.76" width="1.64" height="1.1" fill="#c586c0"/><rect x="28.70" y="70.76" width="3.28" height="1.1" fill="#9cdcfe"/><rect x="31.98" y="70.76" width="0.82" height="1.1" fill="#d4d4d4"/><rect x="3.28" y="72.37" width="3.28" height="1.1" fill="#9cdcfe"/><rect x="6.56" y="72.37" width="0.82" height="1.1" fill="#d4d4d4"/><rect x="7.38" y="72.37" width="4.10" height="1.1" fill="#dcdcaa"/><rect x="11.48" y="72.37" width="0.82" height="1.1" fill="#ffd700"/><rect x="12.30" y="72.37" width="4.92" height="1.1" fill="#ce9178"/><rect x="18.04" y="72.37" width="0.82" height="1.1" fill="#ce9178"/><rect x="19.68" y="72.37" width="4.10" height="1.1" fill="#ce9178"/><rect x="24.60" y="72.37" width="8.20" height="1.1" fill="#ce9178"/><rect x="33.62" y="72.37" width="4.92" height="1.1" fill="#ce9178"/><rect x="38.54" y="72.37" width="0.82" height="1.1" fill="#ffd700"/><rect x="0.00" y="77.18" width="0.82" height="1.1" fill="#7ca668"/><rect x="1.64" y="77.18" width="5.74" height="1.1" fill="#7ca668"/><rect x="0.00" y="82.00" width="3.28" height="1.1" fill="#c586c0"/><rect x="4.10" y="82.00" width="2.46" height="1.1" fill="#c586c0"/><rect x="7.38" y="82.00" width="4.10" height="1.1" fill="#dcdcaa"/><rect x="12.30" y="82.00" width="5.74" height="1.1" fill="#ce9178"/><rect x="18.86" y="82.00" width="1.64" height="1.1" fill="#ce9178"/><rect x="21.32" y="82.00" width="1.64" height="1.1" fill="#c586c0"/><rect x="23.78" y="82.00" width="4.10" height="1.1" fill="#9cdcfe"/><rect x="3.28" y="83.60" width="1.64" height="1.1" fill="#9cdcfe"/><rect x="5.74" y="83.60" width="3.28" height="1.1" fill="#9cdcfe"/><rect x="9.84" y="83.60" width="4.92" height="1.1" fill="#9cdcfe"/><rect x="15.58" y="83.60" width="1.64" height="1.1" fill="#dcdcaa"/><rect x="18.04" y="83.60" width="4.92" height="1.1" fill="#dcdcaa"/><rect x="23.78" y="83.60" width="2.46" height="1.1" fill="#ce9178"/><rect x="27.06" y="83.60" width="1.64" height="1.1" fill="#ce9178"/><rect x="29.52" y="83.60" width="1.64" height="1.1" fill="#ce9178"/><rect x="31.98" y="83.60" width="4.10" height="1.1" fill="#ce9178"/><rect x="36.90" y="83.60" width="4.10" height="1.1" fill="#ce9178"/><rect x="41.82" y="83.60" width="1.64" height="1.1" fill="#7ca668"/><rect x="44.28" y="83.60" width="2.46" height="1.1" fill="#7ca668"/><rect x="47.56" y="83.60" width="1.64" height="1.1" fill="#7ca668"/><rect x="50.02" y="83.60" width="4.92" height="1.1" fill="#7ca668"/><rect x="55.76" y="83.60" width="0.82" height="1.1" fill="#7ca668"/><rect x="0.00" y="86.81" width="1.64" height="1.1" fill="#7ca668"/><rect x="2.46" y="86.81" width="4.92" height="1.1" fill="#7ca668"/><rect x="8.20" y="86.81" width="0.82" height="1.1" fill="#9cdcfe"/><rect x="0.00" y="91.62" width="2.46" height="1.1" fill="#7ca668"/><rect x="3.28" y="91.62" width="4.10" height="1.1" fill="#7ca668"/><rect x="0.00" y="96.44" width="5.74" height="1.1" fill="#c586c0"/><rect x="6.56" y="96.44" width="1.64" height="1.1" fill="#c586c0"/><rect x="0.00" y="99.65" width="1.64" height="1.1" fill="#7ca668"/><rect x="2.46" y="99.65" width="4.92" height="1.1" fill="#7ca668"/><rect x="8.20" y="99.65" width="4.92" height="1.1" fill="#dcdcaa"/><rect x="0.00" y="104.46" width="4.10" height="1.1" fill="#7ca668"/><rect x="4.92" y="104.46" width="1.64" height="1.1" fill="#7ca668"/><rect x="0.00" y="109.28" width="2.46" height="1.1" fill="#dcdcaa"/><rect x="3.28" y="109.28" width="1.64" height="1.1" fill="#dcdcaa"/><rect x="5.74" y="109.28" width="4.92" height="1.1" fill="#ce9178"/><rect x="11.48" y="109.28" width="2.46" height="1.1" fill="#ce9178"/><rect x="14.76" y="109.28" width="3.28" height="1.1" fill="#7ca668"/><rect x="18.86" y="109.28" width="4.10" height="1.1" fill="#7ca668"/><rect x="23.78" y="109.28" width="2.46" height="1.1" fill="#ce9178"/><rect x="27.06" y="109.28" width="4.92" height="1.1" fill="#ce9178"/><rect x="0.00" y="110.88" width="1.64" height="1.1" fill="#7ca668"/><rect x="2.46" y="110.88" width="4.92" height="1.1" fill="#7ca668"/><rect x="8.20" y="110.88" width="3.28" height="1.1" fill="#7ca668"/><rect x="12.30" y="110.88" width="4.92" height="1.1" fill="#ce9178"/><rect x="18.04" y="110.88" width="5.74" height="1.1" fill="#ce9178"/><rect x="24.60" y="110.88" width="2.46" height="1.1" fill="#9cdcfe"/><rect x="27.88" y="110.88" width="1.64" height="1.1" fill="#9cdcfe"/><rect x="30.34" y="110.88" width="4.92" height="1.1" fill="#9cdcfe"/><rect x="36.08" y="110.88" width="2.46" height="1.1" fill="#ce9178"/><rect x="0.00" y="112.49" width="5.74" height="1.1" fill="#7ca668"/><rect x="6.56" y="112.49" width="2.46" height="1.1" fill="#7ca668"/><rect x="9.84" y="112.49" width="3.28" height="1.1" fill="#9cdcfe"/><rect x="13.94" y="112.49" width="1.64" height="1.1" fill="#9cdcfe"/><rect x="16.40" y="112.49" width="4.92" height="1.1" fill="#ce9178"/><rect x="22.14" y="112.49" width="5.74" height="1.1" fill="#ce9178"/><rect x="28.70" y="112.49" width="1.64" height="1.1" fill="#dcdcaa"/><rect x="31.16" y="112.49" width="0.82" height="1.1" fill="#dcdcaa"/><rect x="0.00" y="117.31" width="1.64" height="1.1" fill="#7ca668"/><rect x="2.46" y="117.31" width="4.92" height="1.1" fill="#7ca668"/><rect x="0.00" y="122.12" width="2.46" height="1.1" fill="#dcdcaa"/><rect x="3.28" y="122.12" width="4.10" height="1.1" fill="#dcdcaa"/><rect x="8.20" y="122.12" width="5.74" height="1.1" fill="#9cdcfe"/><rect x="0.00" y="126.94" width="4.92" height="1.1" fill="#7ca668"/><rect x="5.74" y="126.94" width="1.64" height="1.1" fill="#7ca668"/><rect x="0.00" y="131.75" width="3.28" height="1.1" fill="#9cdcfe"/><rect x="4.10" y="131.75" width="4.10" height="1.1" fill="#9cdcfe"/><rect x="0.00" y="134.96" width="4.92" height="1.1" fill="#9cdcfe"/><rect x="5.74" y="134.96" width="4.10" height="1.1" fill="#9cdcfe"/><rect x="10.66" y="134.96" width="3.28" height="1.1" fill="#dcdcaa"/><rect x="14.76" y="134.96" width="0.82" height="1.1" fill="#dcdcaa"/><rect x="0.00" y="138.17" width="2.46" height="1.1" fill="#7ca668"/><rect x="3.28" y="138.17" width="2.46" height="1.1" fill="#7ca668"/><rect x="6.56" y="138.17" width="5.74" height="1.1" fill="#7ca668"/><rect x="13.12" y="138.17" width="2.46" height="1.1" fill="#7ca668"/><rect x="16.40" y="138.17" width="1.64" height="1.1" fill="#7ca668"/><rect x="18.86" y="138.17" width="4.92" height="1.1" fill="#7ca668"/><rect x="24.60" y="138.17" width="3.28" height="1.1" fill="#7ca668"/><rect x="28.70" y="138.17" width="4.92" height="1.1" fill="#7ca668"/><rect x="34.44" y="138.17" width="4.10" height="1.1" fill="#7ca668"/><rect x="39.36" y="138.17" width="3.28" height="1.1" fill="#7ca668"/><rect x="43.46" y="138.17" width="5.74" height="1.1" fill="#7ca668"/><rect x="50.02" y="138.17" width="4.10" height="1.1" fill="#7ca668"/><rect x="54.94" y="138.17" width="3.28" height="1.1" fill="#7ca668"/><rect x="59.04" y="138.17" width="4.10" height="1.1" fill="#7ca668"/><rect x="0.00" y="141.38" width="1.64" height="1.1" fill="#c586c0"/><rect x="2.46" y="141.38" width="1.64" height="1.1" fill="#c586c0"/><rect x="4.92" y="141.38" width="4.92" height="1.1" fill="#9cdcfe"/><rect x="10.66" y="141.38" width="3.28" height="1.1" fill="#9cdcfe"/><rect x="3.28" y="142.98" width="2.46" height="1.1" fill="#7ca668"/><rect x="6.56" y="142.98" width="3.28" height="1.1" fill="#7ca668"/><rect x="10.66" y="142.98" width="2.46" height="1.1" fill="#7ca668"/><rect x="13.94" y="142.98" width="4.10" height="1.1" fill="#9cdcfe"/><rect x="18.86" y="142.98" width="4.10" height="1.1" fill="#9cdcfe"/><rect x="23.78" y="142.98" width="1.64" height="1.1" fill="#9cdcfe"/><rect x="26.24" y="142.98" width="5.74" height="1.1" fill="#ce9178"/><rect x="32.80" y="142.98" width="1.64" height="1.1" fill="#ce9178"/><rect x="6.56" y="144.59" width="4.92" height="1.1" fill="#ce9178"/><rect x="12.30" y="144.59" width="4.92" height="1.1" fill="#ce9178"/><rect x="18.04" y="144.59" width="3.28" height="1.1" fill="#7ca668"/><rect x="0.00" y="147.80" width="3.28" height="1.1" fill="#c586c0"/><rect x="4.10" y="147.80" width="5.74" height="1.1" fill="#c586c0"/><rect x="10.66" y="147.80" width="3.28" height="1.1" fill="#9cdcfe"/><rect x="3.28" y="149.41" width="4.92" height="1.1" fill="#7ca668"/><rect x="9.02" y="149.41" width="4.10" height="1.1" fill="#7ca668"/><rect x="13.94" y="149.41" width="4.92" height="1.1" fill="#7ca668"/><rect x="19.68" y="149.41" width="4.10" height="1.1" fill="#9cdcfe"/><rect x="24.60" y="149.41" width="1.64" height="1.1" fill="#9cdcfe"/><rect x="27.06" y="149.41" width="1.64" height="1.1" fill="#9cdcfe"/><rect x="29.52" y="149.41" width="3.28" height="1.1" fill="#ce9178"/><rect x="33.62" y="149.41" width="1.64" height="1.1" fill="#ce9178"/><rect x="6.56" y="151.01" width="5.74" height="1.1" fill="#ce9178"/><rect x="13.12" y="151.01" width="5.74" height="1.1" fill="#ce9178"/><rect x="19.68" y="151.01" width="1.64" height="1.1" fill="#7ca668"/><rect x="0.00" y="155.82" width="1.64" height="1.1" fill="#7ca668"/><rect x="2.46" y="155.82" width="4.92" height="1.1" fill="#7ca668"/><rect x="0.00" y="160.64" width="5.74" height="1.1" fill="#9cdcfe"/><rect x="6.56" y="160.64" width="3.28" height="1.1" fill="#9cdcfe"/><rect x="10.66" y="160.64" width="5.74" height="1.1" fill="#9cdcfe"/><rect x="17.22" y="160.64" width="4.92" height="1.1" fill="#9cdcfe"/><rect x="22.96" y="160.64" width="5.74" height="1.1" fill="#9cdcfe"/><rect x="29.52" y="160.64" width="4.10" height="1.1" fill="#9cdcfe"/><rect x="34.44" y="160.64" width="3.28" height="1.1" fill="#9cdcfe"/><rect x="38.54" y="160.64" width="5.74" height="1.1" fill="#ce9178"/><rect x="45.10" y="160.64" width="4.10" height="1.1" fill="#ce9178"/><rect x="50.02" y="160.64" width="5.74" height="1.1" fill="#ce9178"/><rect x="0.00" y="163.85" width="3.28" height="1.1" fill="#c586c0"/><rect x="4.10" y="163.85" width="1.64" height="1.1" fill="#c586c0"/><rect x="6.56" y="163.85" width="4.10" height="1.1" fill="#9cdcfe"/><rect x="11.48" y="163.85" width="2.46" height="1.1" fill="#9cdcfe"/><rect x="3.28" y="165.45" width="2.46" height="1.1" fill="#7ca668"/><rect x="6.56" y="165.45" width="4.92" height="1.1" fill="#7ca668"/><rect x="12.30" y="165.45" width="1.64" height="1.1" fill="#7ca668"/><rect x="14.76" y="165.45" width="4.10" height="1.1" fill="#dcdcaa"/><rect x="19.68" y="165.45" width="1.64" height="1.1" fill="#dcdcaa"/><rect x="22.14" y="165.45" width="2.46" height="1.1" fill="#ce9178"/><rect x="25.42" y="165.45" width="3.28" height="1.1" fill="#ce9178"/><rect x="29.52" y="165.45" width="2.46" height="1.1" fill="#ce9178"/><rect x="32.80" y="165.45" width="5.74" height="1.1" fill="#9cdcfe"/><rect x="39.36" y="165.45" width="2.46" height="1.1" fill="#9cdcfe"/><rect x="42.64" y="165.45" width="4.10" height="1.1" fill="#ce9178"/><rect x="47.56" y="165.45" width="4.10" height="1.1" fill="#ce9178"/><rect x="52.48" y="165.45" width="4.10" height="1.1" fill="#ce9178"/><rect x="57.40" y="165.45" width="1.64" height="1.1" fill="#7ca668"/><rect x="59.86" y="165.45" width="1.64" height="1.1" fill="#7ca668"/><rect x="3.28" y="167.06" width="4.10" height="1.1" fill="#9cdcfe"/><rect x="8.20" y="167.06" width="4.10" height="1.1" fill="#9cdcfe"/><rect x="13.12" y="167.06" width="4.92" height="1.1" fill="#9cdcfe"/><rect x="18.86" y="167.06" width="3.28" height="1.1" fill="#9cdcfe"/><rect x="22.96" y="167.06" width="2.46" height="1.1" fill="#dcdcaa"/><rect x="26.24" y="167.06" width="4.10" height="1.1" fill="#dcdcaa"/><rect x="31.16" y="167.06" width="4.92" height="1.1" fill="#dcdcaa"/><rect x="36.90" y="167.06" width="3.28" height="1.1" fill="#dcdcaa"/><rect x="41.00" y="167.06" width="5.74" height="1.1" fill="#ce9178"/><rect x="47.56" y="167.06" width="4.10" height="1.1" fill="#ce9178"/><rect x="52.48" y="167.06" width="3.28" height="1.1" fill="#ce9178"/><rect x="56.58" y="167.06" width="4.92" height="1.1" fill="#ce9178"/><rect x="3.28" y="168.66" width="4.10" height="1.1" fill="#c586c0"/><rect x="8.20" y="168.66" width="2.46" height="1.1" fill="#c586c0"/><rect x="11.48" y="168.66" width="2.46" height="1.1" fill="#c586c0"/><rect x="14.76" y="168.66" width="1.64" height="1.1" fill="#ce9178"/><rect x="17.22" y="168.66" width="2.46" height="1.1" fill="#ce9178"/><rect x="20.50" y="168.66" width="2.46" height="1.1" fill="#ce9178"/><rect x="23.78" y="168.66" width="2.46" height="1.1" fill="#9cdcfe"/><rect x="27.06" y="168.66" width="5.74" height="1.1" fill="#9cdcfe"/><rect x="33.62" y="168.66" width="1.64" height="1.1" fill="#9cdcfe"/><rect x="3.28" y="171.88" width="1.64" height="1.1" fill="#9cdcfe"/><rect x="5.74" y="171.88" width="4.10" height="1.1" fill="#9cdcfe"/><rect x="10.66" y="171.88" width="4.92" height="1.1" fill="#9cdcfe"/><rect x="16.40" y="171.88" width="2.46" height="1.1" fill="#9cdcfe"/><rect x="19.68" y="171.88" width="3.28" height="1.1" fill="#9cdcfe"/><rect x="23.78" y="171.88" width="3.28" height="1.1" fill="#9cdcfe"/><rect x="27.88" y="171.88" width="1.64" height="1.1" fill="#9cdcfe"/><rect x="30.34" y="171.88" width="2.46" height="1.1" fill="#ce9178"/><rect x="33.62" y="171.88" width="4.10" height="1.1" fill="#ce9178"/><rect x="38.54" y="171.88" width="4.92" height="1.1" fill="#ce9178"/><rect x="44.28" y="171.88" width="3.28" height="1.1" fill="#ce9178"/><rect x="48.38" y="171.88" width="4.92" height="1.1" fill="#ce9178"/><rect x="54.12" y="171.88" width="4.92" height="1.1" fill="#ce9178"/><rect x="0.00" y="176.69" width="3.28" height="1.1" fill="#7ca668"/><rect x="4.10" y="176.69" width="2.46" height="1.1" fill="#7ca668"/><rect x="0.00" y="181.50" width="5.74" height="1.1" fill="#9cdcfe"/><rect x="6.56" y="181.50" width="4.92" height="1.1" fill="#9cdcfe"/><rect x="12.30" y="181.50" width="4.92" height="1.1" fill="#9cdcfe"/><rect x="18.04" y="181.50" width="5.74" height="1.1" fill="#9cdcfe"/><rect x="24.60" y="181.50" width="5.74" height="1.1" fill="#9cdcfe"/><rect x="31.16" y="181.50" width="5.74" height="1.1" fill="#9cdcfe"/><rect x="37.72" y="181.50" width="1.64" height="1.1" fill="#ce9178"/><rect x="40.18" y="181.50" width="2.46" height="1.1" fill="#ce9178"/><rect x="0.00" y="186.32" width="5.74" height="1.1" fill="#7ca668"/><rect x="6.56" y="186.32" width="0.82" height="1.1" fill="#7ca668"/><rect x="0.00" y="191.13" width="4.10" height="1.1" fill="#d4d4d4"/><rect x="4.92" y="191.13" width="4.10" height="1.1" fill="#d4d4d4"/><rect x="9.84" y="191.13" width="4.10" height="1.1" fill="#d4d4d4"/><rect x="14.76" y="191.13" width="4.10" height="1.1" fill="#9cdcfe"/><rect x="19.68" y="191.13" width="1.64" height="1.1" fill="#9cdcfe"/><rect x="22.14" y="191.13" width="0.82" height="1.1" fill="#9cdcfe"/><rect x="0.00" y="192.74" width="5.74" height="1.1" fill="#7ca668"/><rect x="6.56" y="192.74" width="3.28" height="1.1" fill="#7ca668"/><rect x="0.00" y="197.56" width="1.64" height="1.1" fill="#7ca668"/><rect x="2.46" y="197.56" width="2.46" height="1.1" fill="#7ca668"/><rect x="5.74" y="197.56" width="1.64" height="1.1" fill="#7ca668"/><rect x="0.00" y="202.37" width="2.46" height="1.1" fill="#9cdcfe"/><rect x="3.28" y="202.37" width="4.10" height="1.1" fill="#9cdcfe"/><rect x="8.20" y="202.37" width="2.46" height="1.1" fill="#9cdcfe"/><rect x="11.48" y="202.37" width="1.64" height="1.1" fill="#ce9178"/><rect x="13.94" y="202.37" width="3.28" height="1.1" fill="#ce9178"/><rect x="18.04" y="202.37" width="3.28" height="1.1" fill="#ce9178"/><rect x="0.00" y="205.58" width="1.64" height="1.1" fill="#c586c0"/><rect x="2.46" y="205.58" width="1.64" height="1.1" fill="#c586c0"/><rect x="4.92" y="205.58" width="1.64" height="1.1" fill="#9cdcfe"/><rect x="7.38" y="205.58" width="4.92" height="1.1" fill="#9cdcfe"/><rect x="13.12" y="205.58" width="2.46" height="1.1" fill="#dcdcaa"/><rect x="16.40" y="205.58" width="4.92" height="1.1" fill="#dcdcaa"/><rect x="22.14" y="205.58" width="1.64" height="1.1" fill="#d4d4d4"/><rect x="24.60" y="205.58" width="3.28" height="1.1" fill="#d4d4d4"/><rect x="28.70" y="205.58" width="0.82" height="1.1" fill="#d4d4d4"/><rect x="3.28" y="207.19" width="1.64" height="1.1" fill="#9cdcfe"/><rect x="5.74" y="207.19" width="1.64" height="1.1" fill="#9cdcfe"/><rect x="8.20" y="207.19" width="2.46" height="1.1" fill="#dcdcaa"/><rect x="11.48" y="207.19" width="4.92" height="1.1" fill="#ce9178"/><rect x="0.00" y="210.39" width="4.10" height="1.1" fill="#c586c0"/><rect x="4.92" y="210.39" width="2.46" height="1.1" fill="#c586c0"/><rect x="8.20" y="210.39" width="5.74" height="1.1" fill="#c586c0"/><rect x="14.76" y="210.39" width="3.28" height="1.1" fill="#9cdcfe"/><rect x="18.86" y="210.39" width="3.28" height="1.1" fill="#9cdcfe"/><rect x="3.28" y="212.00" width="4.92" height="1.1" fill="#9cdcfe"/><rect x="9.02" y="212.00" width="3.28" height="1.1" fill="#9cdcfe"/><rect x="13.12" y="212.00" width="4.10" height="1.1" fill="#9cdcfe"/><rect x="18.04" y="212.00" width="1.64" height="1.1" fill="#d4d4d4"/><rect x="20.50" y="212.00" width="1.64" height="1.1" fill="#d4d4d4"/><rect x="6.56" y="213.60" width="4.10" height="1.1" fill="#9cdcfe"/><rect x="11.48" y="213.60" width="4.10" height="1.1" fill="#9cdcfe"/><rect x="16.40" y="213.60" width="0.82" height="1.1" fill="#ce9178"/><rect x="6.56" y="215.21" width="4.10" height="1.1" fill="#9cdcfe"/><rect x="11.48" y="215.21" width="3.28" height="1.1" fill="#9cdcfe"/><rect x="0.00" y="218.42" width="1.64" height="1.1" fill="#dcdcaa"/><rect x="2.46" y="218.42" width="2.46" height="1.1" fill="#dcdcaa"/><rect x="5.74" y="218.42" width="1.64" height="1.1" fill="#9cdcfe"/><rect x="8.20" y="218.42" width="5.74" height="1.1" fill="#9cdcfe"/><rect x="14.76" y="218.42" width="3.28" height="1.1" fill="#d4d4d4"/><rect x="18.86" y="218.42" width="4.10" height="1.1" fill="#d4d4d4"/><rect x="0.00" y="223.23" width="3.28" height="1.1" fill="#7ca668"/><rect x="4.10" y="223.23" width="3.28" height="1.1" fill="#7ca668"/><rect x="0.00" y="228.05" width="5.74" height="1.1" fill="#ce9178"/><rect x="6.56" y="228.05" width="2.46" height="1.1" fill="#ce9178"/><rect x="9.84" y="228.05" width="4.92" height="1.1" fill="#ce9178"/><rect x="15.58" y="228.05" width="1.64" height="1.1" fill="#ce9178"/><rect x="18.04" y="228.05" width="2.46" height="1.1" fill="#ce9178"/><rect x="21.32" y="228.05" width="4.92" height="1.1" fill="#ce9178"/><rect x="27.06" y="228.05" width="3.28" height="1.1" fill="#dcdcaa"/><rect x="31.16" y="228.05" width="2.46" height="1.1" fill="#dcdcaa"/><rect x="34.44" y="228.05" width="5.74" height="1.1" fill="#dcdcaa"/><rect x="41.00" y="228.05" width="0.82" height="1.1" fill="#dcdcaa"/><rect x="0.00" y="229.66" width="1.64" height="1.1" fill="#c586c0"/><rect x="2.46" y="229.66" width="4.92" height="1.1" fill="#c586c0"/><rect x="8.20" y="229.66" width="3.28" height="1.1" fill="#9cdcfe"/><rect x="12.30" y="229.66" width="5.74" height="1.1" fill="#9cdcfe"/><rect x="18.86" y="229.66" width="1.64" height="1.1" fill="#dcdcaa"/><rect x="21.32" y="229.66" width="5.74" height="1.1" fill="#dcdcaa"/><rect x="27.88" y="229.66" width="1.64" height="1.1" fill="#d4d4d4"/><rect x="3.28" y="231.26" width="4.92" height="1.1" fill="#9cdcfe"/><rect x="9.02" y="231.26" width="3.28" height="1.1" fill="#9cdcfe"/><rect x="13.12" y="231.26" width="2.46" height="1.1" fill="#dcdcaa"/><rect x="16.40" y="231.26" width="0.82" height="1.1" fill="#ce9178"/><rect x="0.00" y="234.47" width="2.46" height="1.1" fill="#9cdcfe"/><rect x="3.28" y="234.47" width="1.64" height="1.1" fill="#9cdcfe"/><rect x="0.00" y="236.07" width="4.92" height="1.1" fill="#7ca668"/><rect x="5.74" y="236.07" width="4.92" height="1.1" fill="#7ca668"/><rect x="11.48" y="236.07" width="3.28" height="1.1" fill="#7ca668"/><rect x="15.58" y="236.07" width="0.82" height="1.1" fill="#dcdcaa"/><rect x="0.00" y="237.68" width="2.46" height="1.1" fill="#dcdcaa"/><rect x="3.28" y="237.68" width="4.92" height="1.1" fill="#dcdcaa"/><rect x="9.02" y="237.68" width="2.46" height="1.1" fill="#dcdcaa"/><rect x="12.30" y="237.68" width="2.46" height="1.1" fill="#9cdcfe"/><rect x="15.58" y="237.68" width="4.10" height="1.1" fill="#9cdcfe"/><rect x="20.50" y="237.68" width="5.74" height="1.1" fill="#9cdcfe"/><rect x="27.06" y="237.68" width="2.46" height="1.1" fill="#ce9178"/><rect x="30.34" y="237.68" width="0.82" height="1.1" fill="#ce9178"/><rect x="0.00" y="242.50" width="4.92" height="1.1" fill="#7ca668"/><rect x="5.74" y="242.50" width="1.64" height="1.1" fill="#7ca668"/><rect x="0.00" y="247.31" width="3.28" height="1.1" fill="#c586c0"/><rect x="4.10" y="247.31" width="5.74" height="1.1" fill="#c586c0"/><rect x="10.66" y="247.31" width="1.64" height="1.1" fill="#c586c0"/><rect x="13.12" y="247.31" width="1.64" height="1.1" fill="#9cdcfe"/><rect x="15.58" y="247.31" width="3.28" height="1.1" fill="#9cdcfe"/><rect x="19.68" y="247.31" width="4.10" height="1.1" fill="#9cdcfe"/><rect x="24.60" y="247.31" width="3.28" height="1.1" fill="#dcdcaa"/><rect x="28.70" y="247.31" width="0.82" height="1.1" fill="#dcdcaa"/><rect x="3.28" y="248.92" width="5.74" height="1.1" fill="#9cdcfe"/><rect x="9.84" y="248.92" width="4.92" height="1.1" fill="#9cdcfe"/><rect x="15.58" y="248.92" width="1.64" height="1.1" fill="#dcdcaa"/><rect x="0.00" y="252.12" width="4.10" height="1.1" fill="#9cdcfe"/><rect x="4.92" y="252.12" width="5.74" height="1.1" fill="#9cdcfe"/><rect x="11.48" y="252.12" width="3.28" height="1.1" fill="#9cdcfe"/><rect x="15.58" y="252.12" width="3.28" height="1.1" fill="#ce9178"/><rect x="19.68" y="252.12" width="1.64" height="1.1" fill="#ce9178"/><rect x="22.14" y="252.12" width="2.46" height="1.1" fill="#d4d4d4"/><rect x="25.42" y="252.12" width="1.64" height="1.1" fill="#d4d4d4"/><rect x="27.88" y="252.12" width="2.46" height="1.1" fill="#d4d4d4"/><rect x="31.16" y="252.12" width="4.10" height="1.1" fill="#9cdcfe"/><rect x="36.08" y="252.12" width="2.46" height="1.1" fill="#9cdcfe"/><rect x="0.00" y="255.33" width="3.28" height="1.1" fill="#7ca668"/><rect x="4.10" y="255.33" width="2.46" height="1.1" fill="#7ca668"/><rect x="7.38" y="255.33" width="4.10" height="1.1" fill="#7ca668"/><rect x="12.30" y="255.33" width="4.92" height="1.1" fill="#7ca668"/><rect x="18.04" y="255.33" width="4.92" height="1.1" fill="#9cdcfe"/><rect x="23.78" y="255.33" width="0.82" height="1.1" fill="#9cdcfe"/><rect x="0.00" y="260.15" width="4.10" height="1.1" fill="#7ca668"/><rect x="4.92" y="260.15" width="2.46" height="1.1" fill="#7ca668"/><rect x="0.00" y="264.96" width="3.28" height="1.1" fill="#9cdcfe"/><rect x="4.10" y="264.96" width="5.74" height="1.1" fill="#9cdcfe"/><rect x="10.66" y="264.96" width="1.64" height="1.1" fill="#9cdcfe"/><rect x="13.12" y="264.96" width="5.74" height="1.1" fill="#dcdcaa"/><rect x="19.68" y="264.96" width="1.64" height="1.1" fill="#dcdcaa"/><rect x="22.14" y="264.96" width="1.64" height="1.1" fill="#dcdcaa"/><rect x="0.00" y="266.57" width="5.74" height="1.1" fill="#dcdcaa"/><rect x="6.56" y="266.57" width="2.46" height="1.1" fill="#dcdcaa"/><rect x="9.84" y="266.57" width="4.10" height="1.1" fill="#dcdcaa"/><rect x="14.76" y="266.57" width="2.46" height="1.1" fill="#9cdcfe"/><rect x="18.04" y="266.57" width="4.10" height="1.1" fill="#9cdcfe"/><rect x="22.96" y="266.57" width="5.74" height="1.1" fill="#9cdcfe"/><rect x="29.52" y="266.57" width="3.28" height="1.1" fill="#7ca668"/><rect x="33.62" y="266.57" width="1.64" height="1.1" fill="#7ca668"/><rect x="0.00" y="271.39" width="5.74" height="1.1" fill="#7ca668"/></svg><div style="position:absolute;left:1436px;top:345.5px;width:90px;height:5.3px;background:#6b5600;"></div><div style="position:absolute;left:1436px;top:345.5px;width:8px;height:5.3px;background:#a88600;"></div><div style="position:absolute;left:1526px;top:74px;width:10px;height:161px;background:#4b7a89;"></div><div style="position:absolute;left:1525px;top:235px;width:1px;height:580px;background:#1e1e1e;"></div><div style="position:absolute;left:1533px;top:639px;width:3px;height:9px;background:#c9a400;"></div><svg style="position:absolute;left:8px;top:818px;" width="11" height="11" viewBox="0 0 11 11" fill="none"><path d="M2 3 L5 5.5 L2 8.5 M9 1 L6 3.5 L9 6.5" stroke="#e8e8e8" stroke-width="1.1"/></svg><svg style="position:absolute;left:33.5px;top:818.5px;" width="10" height="10" viewBox="0 0 10 10" fill="none"><circle cx="5" cy="5" r="4.3" stroke="#e8e8e8" stroke-width="1"/><path d="M3 3 L7 7 M7 3 L3 7" stroke="#e8e8e8" stroke-width="1"/></svg><div style="position:absolute;left:46.5px;top:820px;font:normal 10.0px/10.0px 'Liberation Sans', sans-serif;color:#f0f0f0;white-space:pre;">0</div><svg style="position:absolute;left:55.5px;top:818px;" width="11" height="10" viewBox="0 0 11 10" fill="none"><path d="M5.5 0.8 L10.3 9.3 H0.7 Z" stroke="#e8e8e8" stroke-width="1"/><path d="M5.5 3.8 V6.5 M5.5 7.5 V8.3" stroke="#e8e8e8" stroke-width="0.9"/></svg><div style="position:absolute;left:68.3px;top:820px;font:normal 10.0px/10.0px 'Liberation Sans', sans-serif;color:#f0f0f0;white-space:pre;">5</div><svg style="position:absolute;left:87px;top:818px;" width="11" height="12" viewBox="0 0 11 12" fill="none"><path d="M4 1 L10 5 L4 9 Z" stroke="#e8e8e8" stroke-width="1"/><rect x="1" y="7" width="4" height="4" stroke="#e8e8e8" stroke-width="1"/></svg><div style="position:absolute;left:1142px;top:820px;font:normal 9.8px/9.8px 'Liberation Sans', sans-serif;color:#f0f0f0;white-space:pre;transform:scaleX(0.9452);transform-origin:0 0;">Строка 1, столбец 1</div><div style="position:absolute;left:1241px;top:820px;font:normal 9.8px/9.8px 'Liberation Sans', sans-serif;color:#f0f0f0;white-space:pre;transform:scaleX(0.9654);transform-origin:0 0;">Пробелов: 4</div><div style="position:absolute;left:1308.5px;top:820px;font:normal 9.8px/9.8px 'Liberation Sans', sans-serif;color:#f0f0f0;white-space:pre;transform:scaleX(0.9004);transform-origin:0 0;">UTF-8</div><div style="position:absolute;left:1346.7px;top:820px;font:normal 9.8px/9.8px 'Liberation Sans', sans-serif;color:#f0f0f0;white-space:pre;transform:scaleX(0.8131);transform-origin:0 0;">LF</div><div style="position:absolute;left:1383px;top:820px;font:normal 9.8px/9.8px 'Liberation Sans', sans-serif;color:#f0f0f0;white-space:pre;transform:scaleX(0.9503);transform-origin:0 0;">Python</div><div style="position:absolute;left:1423.4px;top:820px;font:normal 9.8px/9.8px 'Liberation Sans', sans-serif;color:#f0f0f0;white-space:pre;transform:scaleX(0.9786);transform-origin:0 0;">3.11.3 64-bit</div><svg style="position:absolute;left:1369px;top:818px;" width="10" height="11" viewBox="0 0 10 11" fill="none"><path d="M3 0.8 Q1 1.5 1 5.5 Q1 9.5 3 10.2" stroke="#e8e8e8" stroke-width="1"/><circle cx="6.5" cy="7.5" r="2" fill="#f0f0f0"/><path d="M6.5 5.5 V2" stroke="#f0f0f0" stroke-width="1"/></svg><svg style="position:absolute;left:1489px;top:818px;" width="12" height="11" viewBox="0 0 12 11" fill="none"><circle cx="4.5" cy="3.5" r="2.5" stroke="#e8e8e8" stroke-width="1"/><path d="M0.8 10.5 Q1.5 7 4.5 7 Q7 7 7.5 9 M6 1 H11 V6 H9 L8 7.5" stroke="#e8e8e8" stroke-width="1"/></svg><svg style="position:absolute;left:1513px;top:817.5px;" width="11" height="12" viewBox="0 0 11 12" fill="none"><path d="M2 8.5 V5 Q2 1.2 5.5 1.2 Q9 1.2 9 5 V8.5 L10 9.5 H1 Z M4 10.5 Q5.5 12 7 10.5" stroke="#e8e8e8" stroke-width="1"/></svg><svg style="position:absolute;left:0px;top:0px;" width="1536" height="830" viewBox="0 0 1536 830" fill="none"><rect x="5.30" y="31.00" width="231.90" height="785.90" stroke="#ff0000" stroke-width="2.8" fill="none"/><rect x="244.95" y="28.65" width="1199.30" height="38.90" stroke="#ff0000" stroke-width="2.7" fill="none"/><rect x="246.45" y="75.25" width="1170.80" height="727.80" stroke="#ff0000" stroke-width="2.5" fill="none"/></svg>
</body></html>
